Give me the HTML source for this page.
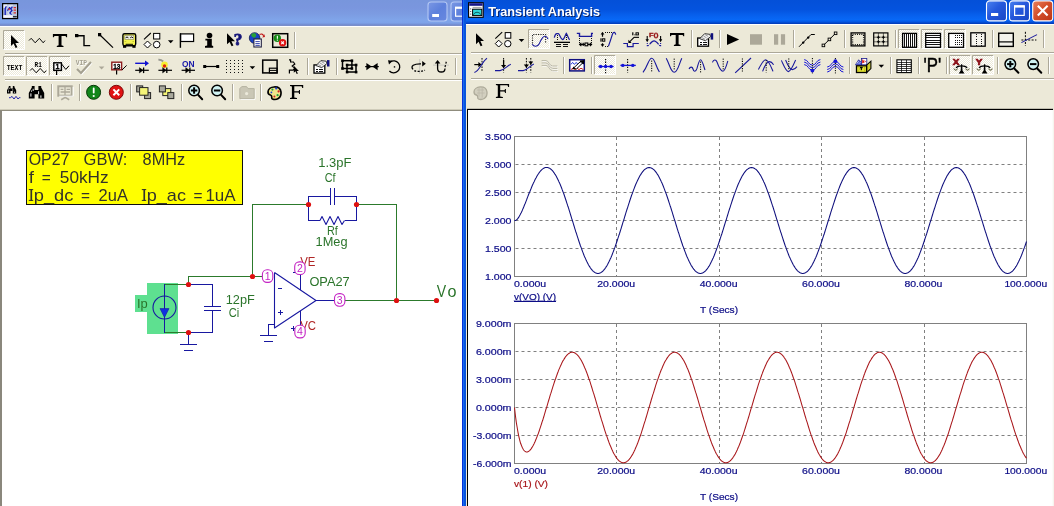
<!DOCTYPE html>
<html><head><meta charset="utf-8"><title>Transient Analysis</title><style>
html,body{margin:0;padding:0;}
body{width:1054px;height:506px;overflow:hidden;position:relative;background:#ece9d8;font-family:"Liberation Sans",sans-serif;}
.abs{position:absolute;}
#lwin{position:absolute;left:0;top:0;width:462px;height:506px;background:#ece9d8;overflow:hidden;}
#ltitle{position:absolute;left:0;top:0;width:462px;height:26px;background:linear-gradient(to bottom,#7896dc 0%,#7a96de 30%,#7c9ce2 55%,#80a5ea 78%,#7ea2e8 88%,#7590d4 94%,#7f8fc4 100%);}
#lclient{position:absolute;left:0;top:110px;width:462px;height:400px;background:#fff;border-left:2px solid #8a877c;border-top:1px solid #8f8c7d;box-sizing:border-box;box-shadow:0 -1px 0 #cfccba;}
#rwin{position:absolute;left:462px;top:0;width:592px;height:506px;background:#ece9d8;overflow:hidden;}
#rtitle{position:absolute;left:0;top:0;width:592px;height:24px;background:linear-gradient(to bottom,#0450d8 0%,#0453de 40%,#075fec 62%,#0868f6 82%,#0558e4 90%,#0238b4 100%);}
#rborder{position:absolute;left:0;top:0;width:4px;height:506px;background:linear-gradient(to right,#0831d9 0,#0831d9 1px,#166aee 1px,#166aee 2px,#0855dd 2px,#0855dd 4px);}
#rclient{position:absolute;left:5px;top:109px;width:586px;height:400px;background:#fff;border-left:1px solid #000;border-top:1px solid #000;box-shadow:0 -1px 0 rgba(0,0,0,0.18);box-sizing:border-box;}
svg{position:absolute;left:0;top:0;overflow:visible;will-change:transform;}
svg{font-family:"Liberation Sans",sans-serif;}
</style></head><body>
<div id="lwin"><div id="ltitle"></div><div id="lclient"></div></div>
<div id="rwin"><div id="rtitle"></div><div id="rborder"></div><div id="rclient"></div></div>
<svg id="ov" width="1054" height="506" viewBox="0 0 1054 506">
<rect x="514.5" y="136.5" width="512.0" height="140" fill="#fff" stroke="#808080" stroke-width="1"/>
<line x1="616.5" y1="137" x2="616.5" y2="276" stroke="#808080" stroke-width="1" stroke-dasharray="3 3"/>
<line x1="719.5" y1="137" x2="719.5" y2="276" stroke="#808080" stroke-width="1" stroke-dasharray="3 3"/>
<line x1="821.5" y1="137" x2="821.5" y2="276" stroke="#808080" stroke-width="1" stroke-dasharray="3 3"/>
<line x1="924.5" y1="137" x2="924.5" y2="276" stroke="#808080" stroke-width="1" stroke-dasharray="3 3"/>
<line x1="515.5" y1="164.5" x2="1026.5" y2="164.5" stroke="#808080" stroke-width="1" stroke-dasharray="3 3"/>
<line x1="515.5" y1="192.5" x2="1026.5" y2="192.5" stroke="#808080" stroke-width="1" stroke-dasharray="3 3"/>
<line x1="515.5" y1="220.5" x2="1026.5" y2="220.5" stroke="#808080" stroke-width="1" stroke-dasharray="3 3"/>
<line x1="515.5" y1="248.5" x2="1026.5" y2="248.5" stroke="#808080" stroke-width="1" stroke-dasharray="3 3"/>
<text x="511.5" y="140" font-size="9.3" fill="#0c0c86" stroke="#0c0c86" stroke-width="0.2" text-anchor="end" textLength="26.5" lengthAdjust="spacingAndGlyphs" >3.500</text>
<text x="511.5" y="168" font-size="9.3" fill="#0c0c86" stroke="#0c0c86" stroke-width="0.2" text-anchor="end" textLength="26.5" lengthAdjust="spacingAndGlyphs" >3.000</text>
<text x="511.5" y="196" font-size="9.3" fill="#0c0c86" stroke="#0c0c86" stroke-width="0.2" text-anchor="end" textLength="26.5" lengthAdjust="spacingAndGlyphs" >2.500</text>
<text x="511.5" y="224" font-size="9.3" fill="#0c0c86" stroke="#0c0c86" stroke-width="0.2" text-anchor="end" textLength="26.5" lengthAdjust="spacingAndGlyphs" >2.000</text>
<text x="511.5" y="252" font-size="9.3" fill="#0c0c86" stroke="#0c0c86" stroke-width="0.2" text-anchor="end" textLength="26.5" lengthAdjust="spacingAndGlyphs" >1.500</text>
<text x="511.5" y="280" font-size="9.3" fill="#0c0c86" stroke="#0c0c86" stroke-width="0.2" text-anchor="end" textLength="26.5" lengthAdjust="spacingAndGlyphs" >1.000</text>
<text x="514" y="286.5" font-size="9.3" fill="#0c0c86" stroke="#0c0c86" stroke-width="0.2" text-anchor="start" textLength="32.2" lengthAdjust="spacingAndGlyphs" >0.000u</text>
<text x="616.2" y="286.5" font-size="9.3" fill="#0c0c86" stroke="#0c0c86" stroke-width="0.2" text-anchor="middle" textLength="37.9" lengthAdjust="spacingAndGlyphs" >20.000u</text>
<text x="718.6" y="286.5" font-size="9.3" fill="#0c0c86" stroke="#0c0c86" stroke-width="0.2" text-anchor="middle" textLength="37.9" lengthAdjust="spacingAndGlyphs" >40.000u</text>
<text x="821.0" y="286.5" font-size="9.3" fill="#0c0c86" stroke="#0c0c86" stroke-width="0.2" text-anchor="middle" textLength="37.9" lengthAdjust="spacingAndGlyphs" >60.000u</text>
<text x="923.4" y="286.5" font-size="9.3" fill="#0c0c86" stroke="#0c0c86" stroke-width="0.2" text-anchor="middle" textLength="37.9" lengthAdjust="spacingAndGlyphs" >80.000u</text>
<text x="1025.8" y="286.5" font-size="9.3" fill="#0c0c86" stroke="#0c0c86" stroke-width="0.2" text-anchor="middle" textLength="42.8" lengthAdjust="spacingAndGlyphs" >100.000u</text>
<path d="M514.5,220.5 L515.0,220.5 L515.5,220.4 L516.0,220.2 L516.5,219.8 L517.1,219.4 L517.6,218.8 L518.1,218.2 L518.6,217.4 L519.1,216.6 L519.6,215.7 L520.1,214.8 L520.6,213.8 L521.2,212.8 L521.7,211.7 L522.2,210.6 L522.7,209.4 L523.2,208.2 L523.7,207.0 L524.2,205.7 L524.7,204.4 L525.3,203.2 L525.8,201.9 L526.3,200.6 L526.8,199.3 L527.3,197.9 L527.8,196.6 L528.3,195.3 L528.8,194.0 L529.3,192.7 L529.9,191.5 L530.4,190.2 L530.9,189.0 L531.4,187.7 L531.9,186.5 L532.4,185.3 L532.9,184.2 L533.4,183.1 L534.0,182.0 L534.5,180.9 L535.0,179.8 L535.5,178.8 L536.0,177.9 L536.5,176.9 L537.0,176.0 L537.5,175.2 L538.1,174.3 L538.6,173.6 L539.1,172.8 L539.6,172.1 L540.1,171.5 L540.6,170.9 L541.1,170.3 L541.6,169.8 L542.1,169.4 L542.7,168.9 L543.2,168.6 L543.7,168.3 L544.2,168.0 L544.7,167.8 L545.2,167.6 L545.7,167.5 L546.2,167.4 L546.8,167.4 L547.3,167.5 L547.8,167.5 L548.3,167.7 L548.8,167.9 L549.3,168.1 L549.8,168.4 L550.3,168.8 L550.9,169.2 L551.4,169.6 L551.9,170.1 L552.4,170.6 L552.9,171.2 L553.4,171.9 L553.9,172.6 L554.4,173.3 L554.9,174.1 L555.5,174.9 L556.0,175.8 L556.5,176.7 L557.0,177.7 L557.5,178.7 L558.0,179.7 L558.5,180.8 L559.0,181.9 L559.6,183.1 L560.1,184.3 L560.6,185.5 L561.1,186.7 L561.6,188.0 L562.1,189.4 L562.6,190.7 L563.1,192.1 L563.7,193.5 L564.2,195.0 L564.7,196.5 L565.2,198.0 L565.7,199.5 L566.2,201.0 L566.7,202.6 L567.2,204.1 L567.7,205.7 L568.3,207.3 L568.8,208.9 L569.3,210.6 L569.8,212.2 L570.3,213.9 L570.8,215.5 L571.3,217.2 L571.8,218.8 L572.4,220.5 L572.9,222.2 L573.4,223.8 L573.9,225.5 L574.4,227.1 L574.9,228.8 L575.4,230.4 L575.9,232.0 L576.5,233.7 L577.0,235.3 L577.5,236.9 L578.0,238.4 L578.5,240.0 L579.0,241.5 L579.5,243.0 L580.0,244.5 L580.5,246.0 L581.1,247.4 L581.6,248.9 L582.1,250.2 L582.6,251.6 L583.1,252.9 L583.6,254.2 L584.1,255.5 L584.6,256.7 L585.2,257.9 L585.7,259.1 L586.2,260.2 L586.7,261.3 L587.2,262.3 L587.7,263.3 L588.2,264.3 L588.7,265.2 L589.3,266.1 L589.8,266.9 L590.3,267.7 L590.8,268.4 L591.3,269.1 L591.8,269.7 L592.3,270.3 L592.8,270.8 L593.3,271.3 L593.9,271.8 L594.4,272.1 L594.9,272.5 L595.4,272.8 L595.9,273.0 L596.4,273.2 L596.9,273.3 L597.4,273.4 L598.0,273.4 L598.5,273.4 L599.0,273.3 L599.5,273.2 L600.0,273.0 L600.5,272.8 L601.0,272.5 L601.5,272.1 L602.1,271.8 L602.6,271.3 L603.1,270.8 L603.6,270.3 L604.1,269.7 L604.6,269.1 L605.1,268.4 L605.6,267.7 L606.1,266.9 L606.7,266.1 L607.2,265.2 L607.7,264.3 L608.2,263.3 L608.7,262.3 L609.2,261.3 L609.7,260.2 L610.2,259.1 L610.8,257.9 L611.3,256.7 L611.8,255.5 L612.3,254.2 L612.8,252.9 L613.3,251.6 L613.8,250.2 L614.3,248.9 L614.9,247.4 L615.4,246.0 L615.9,244.5 L616.4,243.0 L616.9,241.5 L617.4,240.0 L617.9,238.4 L618.4,236.9 L618.9,235.3 L619.5,233.7 L620.0,232.0 L620.5,230.4 L621.0,228.8 L621.5,227.1 L622.0,225.5 L622.5,223.8 L623.0,222.2 L623.6,220.5 L624.1,218.8 L624.6,217.2 L625.1,215.5 L625.6,213.9 L626.1,212.2 L626.6,210.6 L627.1,209.0 L627.7,207.3 L628.2,205.7 L628.7,204.1 L629.2,202.6 L629.7,201.0 L630.2,199.5 L630.7,198.0 L631.2,196.5 L631.7,195.0 L632.3,193.6 L632.8,192.1 L633.3,190.8 L633.8,189.4 L634.3,188.1 L634.8,186.8 L635.3,185.5 L635.8,184.3 L636.4,183.1 L636.9,181.9 L637.4,180.8 L637.9,179.7 L638.4,178.7 L638.9,177.7 L639.4,176.7 L639.9,175.8 L640.5,174.9 L641.0,174.1 L641.5,173.3 L642.0,172.6 L642.5,171.9 L643.0,171.3 L643.5,170.7 L644.0,170.2 L644.5,169.7 L645.1,169.2 L645.6,168.9 L646.1,168.5 L646.6,168.2 L647.1,168.0 L647.6,167.8 L648.1,167.7 L648.6,167.6 L649.2,167.6 L649.7,167.6 L650.2,167.7 L650.7,167.8 L651.2,168.0 L651.7,168.2 L652.2,168.5 L652.7,168.9 L653.3,169.2 L653.8,169.7 L654.3,170.2 L654.8,170.7 L655.3,171.3 L655.8,171.9 L656.3,172.6 L656.8,173.3 L657.3,174.1 L657.9,174.9 L658.4,175.8 L658.9,176.7 L659.4,177.7 L659.9,178.7 L660.4,179.7 L660.9,180.8 L661.4,181.9 L662.0,183.1 L662.5,184.3 L663.0,185.5 L663.5,186.8 L664.0,188.1 L664.5,189.4 L665.0,190.8 L665.5,192.1 L666.1,193.6 L666.6,195.0 L667.1,196.5 L667.6,198.0 L668.1,199.5 L668.6,201.0 L669.1,202.6 L669.6,204.1 L670.1,205.7 L670.7,207.3 L671.2,209.0 L671.7,210.6 L672.2,212.2 L672.7,213.9 L673.2,215.5 L673.7,217.2 L674.2,218.8 L674.8,220.5 L675.3,222.2 L675.8,223.8 L676.3,225.5 L676.8,227.1 L677.3,228.8 L677.8,230.4 L678.3,232.0 L678.9,233.7 L679.4,235.3 L679.9,236.9 L680.4,238.4 L680.9,240.0 L681.4,241.5 L681.9,243.0 L682.4,244.5 L682.9,246.0 L683.5,247.4 L684.0,248.9 L684.5,250.2 L685.0,251.6 L685.5,252.9 L686.0,254.2 L686.5,255.5 L687.0,256.7 L687.6,257.9 L688.1,259.1 L688.6,260.2 L689.1,261.3 L689.6,262.3 L690.1,263.3 L690.6,264.3 L691.1,265.2 L691.7,266.1 L692.2,266.9 L692.7,267.7 L693.2,268.4 L693.7,269.1 L694.2,269.7 L694.7,270.3 L695.2,270.8 L695.7,271.3 L696.3,271.8 L696.8,272.1 L697.3,272.5 L697.8,272.8 L698.3,273.0 L698.8,273.2 L699.3,273.3 L699.8,273.4 L700.4,273.4 L700.9,273.4 L701.4,273.3 L701.9,273.2 L702.4,273.0 L702.9,272.8 L703.4,272.5 L703.9,272.1 L704.5,271.8 L705.0,271.3 L705.5,270.8 L706.0,270.3 L706.5,269.7 L707.0,269.1 L707.5,268.4 L708.0,267.7 L708.5,266.9 L709.1,266.1 L709.6,265.2 L710.1,264.3 L710.6,263.3 L711.1,262.3 L711.6,261.3 L712.1,260.2 L712.6,259.1 L713.2,257.9 L713.7,256.7 L714.2,255.5 L714.7,254.2 L715.2,252.9 L715.7,251.6 L716.2,250.2 L716.7,248.9 L717.3,247.4 L717.8,246.0 L718.3,244.5 L718.8,243.0 L719.3,241.5 L719.8,240.0 L720.3,238.4 L720.8,236.9 L721.3,235.3 L721.9,233.7 L722.4,232.0 L722.9,230.4 L723.4,228.8 L723.9,227.1 L724.4,225.5 L724.9,223.8 L725.4,222.2 L726.0,220.5 L726.5,218.8 L727.0,217.2 L727.5,215.5 L728.0,213.9 L728.5,212.2 L729.0,210.6 L729.5,209.0 L730.1,207.3 L730.6,205.7 L731.1,204.1 L731.6,202.6 L732.1,201.0 L732.6,199.5 L733.1,198.0 L733.6,196.5 L734.1,195.0 L734.7,193.6 L735.2,192.1 L735.7,190.8 L736.2,189.4 L736.7,188.1 L737.2,186.8 L737.7,185.5 L738.2,184.3 L738.8,183.1 L739.3,181.9 L739.8,180.8 L740.3,179.7 L740.8,178.7 L741.3,177.7 L741.8,176.7 L742.3,175.8 L742.9,174.9 L743.4,174.1 L743.9,173.3 L744.4,172.6 L744.9,171.9 L745.4,171.3 L745.9,170.7 L746.4,170.2 L746.9,169.7 L747.5,169.2 L748.0,168.9 L748.5,168.5 L749.0,168.2 L749.5,168.0 L750.0,167.8 L750.5,167.7 L751.0,167.6 L751.6,167.6 L752.1,167.6 L752.6,167.7 L753.1,167.8 L753.6,168.0 L754.1,168.2 L754.6,168.5 L755.1,168.9 L755.7,169.2 L756.2,169.7 L756.7,170.2 L757.2,170.7 L757.7,171.3 L758.2,171.9 L758.7,172.6 L759.2,173.3 L759.7,174.1 L760.3,174.9 L760.8,175.8 L761.3,176.7 L761.8,177.7 L762.3,178.7 L762.8,179.7 L763.3,180.8 L763.8,181.9 L764.4,183.1 L764.9,184.3 L765.4,185.5 L765.9,186.8 L766.4,188.1 L766.9,189.4 L767.4,190.8 L767.9,192.1 L768.5,193.6 L769.0,195.0 L769.5,196.5 L770.0,198.0 L770.5,199.5 L771.0,201.0 L771.5,202.6 L772.0,204.1 L772.5,205.7 L773.1,207.3 L773.6,209.0 L774.1,210.6 L774.6,212.2 L775.1,213.9 L775.6,215.5 L776.1,217.2 L776.6,218.8 L777.2,220.5 L777.7,222.2 L778.2,223.8 L778.7,225.5 L779.2,227.1 L779.7,228.8 L780.2,230.4 L780.7,232.0 L781.3,233.7 L781.8,235.3 L782.3,236.9 L782.8,238.4 L783.3,240.0 L783.8,241.5 L784.3,243.0 L784.8,244.5 L785.3,246.0 L785.9,247.4 L786.4,248.9 L786.9,250.2 L787.4,251.6 L787.9,252.9 L788.4,254.2 L788.9,255.5 L789.4,256.7 L790.0,257.9 L790.5,259.1 L791.0,260.2 L791.5,261.3 L792.0,262.3 L792.5,263.3 L793.0,264.3 L793.5,265.2 L794.1,266.1 L794.6,266.9 L795.1,267.7 L795.6,268.4 L796.1,269.1 L796.6,269.7 L797.1,270.3 L797.6,270.8 L798.1,271.3 L798.7,271.8 L799.2,272.1 L799.7,272.5 L800.2,272.8 L800.7,273.0 L801.2,273.2 L801.7,273.3 L802.2,273.4 L802.8,273.4 L803.3,273.4 L803.8,273.3 L804.3,273.2 L804.8,273.0 L805.3,272.8 L805.8,272.5 L806.3,272.1 L806.9,271.8 L807.4,271.3 L807.9,270.8 L808.4,270.3 L808.9,269.7 L809.4,269.1 L809.9,268.4 L810.4,267.7 L810.9,266.9 L811.5,266.1 L812.0,265.2 L812.5,264.3 L813.0,263.3 L813.5,262.3 L814.0,261.3 L814.5,260.2 L815.0,259.1 L815.6,257.9 L816.1,256.7 L816.6,255.5 L817.1,254.2 L817.6,252.9 L818.1,251.6 L818.6,250.2 L819.1,248.9 L819.7,247.4 L820.2,246.0 L820.7,244.5 L821.2,243.0 L821.7,241.5 L822.2,240.0 L822.7,238.4 L823.2,236.9 L823.7,235.3 L824.3,233.7 L824.8,232.0 L825.3,230.4 L825.8,228.8 L826.3,227.1 L826.8,225.5 L827.3,223.8 L827.8,222.2 L828.4,220.5 L828.9,218.8 L829.4,217.2 L829.9,215.5 L830.4,213.9 L830.9,212.2 L831.4,210.6 L831.9,209.0 L832.5,207.3 L833.0,205.7 L833.5,204.1 L834.0,202.6 L834.5,201.0 L835.0,199.5 L835.5,198.0 L836.0,196.5 L836.5,195.0 L837.1,193.6 L837.6,192.1 L838.1,190.8 L838.6,189.4 L839.1,188.1 L839.6,186.8 L840.1,185.5 L840.6,184.3 L841.2,183.1 L841.7,181.9 L842.2,180.8 L842.7,179.7 L843.2,178.7 L843.7,177.7 L844.2,176.7 L844.7,175.8 L845.3,174.9 L845.8,174.1 L846.3,173.3 L846.8,172.6 L847.3,171.9 L847.8,171.3 L848.3,170.7 L848.8,170.2 L849.3,169.7 L849.9,169.2 L850.4,168.9 L850.9,168.5 L851.4,168.2 L851.9,168.0 L852.4,167.8 L852.9,167.7 L853.4,167.6 L854.0,167.6 L854.5,167.6 L855.0,167.7 L855.5,167.8 L856.0,168.0 L856.5,168.2 L857.0,168.5 L857.5,168.9 L858.1,169.2 L858.6,169.7 L859.1,170.2 L859.6,170.7 L860.1,171.3 L860.6,171.9 L861.1,172.6 L861.6,173.3 L862.1,174.1 L862.7,174.9 L863.2,175.8 L863.7,176.7 L864.2,177.7 L864.7,178.7 L865.2,179.7 L865.7,180.8 L866.2,181.9 L866.8,183.1 L867.3,184.3 L867.8,185.5 L868.3,186.8 L868.8,188.1 L869.3,189.4 L869.8,190.8 L870.3,192.1 L870.9,193.6 L871.4,195.0 L871.9,196.5 L872.4,198.0 L872.9,199.5 L873.4,201.0 L873.9,202.6 L874.4,204.1 L874.9,205.7 L875.5,207.3 L876.0,209.0 L876.5,210.6 L877.0,212.2 L877.5,213.9 L878.0,215.5 L878.5,217.2 L879.0,218.8 L879.6,220.5 L880.1,222.2 L880.6,223.8 L881.1,225.5 L881.6,227.1 L882.1,228.8 L882.6,230.4 L883.1,232.0 L883.7,233.7 L884.2,235.3 L884.7,236.9 L885.2,238.4 L885.7,240.0 L886.2,241.5 L886.7,243.0 L887.2,244.5 L887.7,246.0 L888.3,247.4 L888.8,248.9 L889.3,250.2 L889.8,251.6 L890.3,252.9 L890.8,254.2 L891.3,255.5 L891.8,256.7 L892.4,257.9 L892.9,259.1 L893.4,260.2 L893.9,261.3 L894.4,262.3 L894.9,263.3 L895.4,264.3 L895.9,265.2 L896.5,266.1 L897.0,266.9 L897.5,267.7 L898.0,268.4 L898.5,269.1 L899.0,269.7 L899.5,270.3 L900.0,270.8 L900.5,271.3 L901.1,271.8 L901.6,272.1 L902.1,272.5 L902.6,272.8 L903.1,273.0 L903.6,273.2 L904.1,273.3 L904.6,273.4 L905.2,273.4 L905.7,273.4 L906.2,273.3 L906.7,273.2 L907.2,273.0 L907.7,272.8 L908.2,272.5 L908.7,272.1 L909.3,271.8 L909.8,271.3 L910.3,270.8 L910.8,270.3 L911.3,269.7 L911.8,269.1 L912.3,268.4 L912.8,267.7 L913.3,266.9 L913.9,266.1 L914.4,265.2 L914.9,264.3 L915.4,263.3 L915.9,262.3 L916.4,261.3 L916.9,260.2 L917.4,259.1 L918.0,257.9 L918.5,256.7 L919.0,255.5 L919.5,254.2 L920.0,252.9 L920.5,251.6 L921.0,250.2 L921.5,248.9 L922.1,247.4 L922.6,246.0 L923.1,244.5 L923.6,243.0 L924.1,241.5 L924.6,240.0 L925.1,238.4 L925.6,236.9 L926.1,235.3 L926.7,233.7 L927.2,232.0 L927.7,230.4 L928.2,228.8 L928.7,227.1 L929.2,225.5 L929.7,223.8 L930.2,222.2 L930.8,220.5 L931.3,218.8 L931.8,217.2 L932.3,215.5 L932.8,213.9 L933.3,212.2 L933.8,210.6 L934.3,209.0 L934.9,207.3 L935.4,205.7 L935.9,204.1 L936.4,202.6 L936.9,201.0 L937.4,199.5 L937.9,198.0 L938.4,196.5 L938.9,195.0 L939.5,193.6 L940.0,192.1 L940.5,190.8 L941.0,189.4 L941.5,188.1 L942.0,186.8 L942.5,185.5 L943.0,184.3 L943.6,183.1 L944.1,181.9 L944.6,180.8 L945.1,179.7 L945.6,178.7 L946.1,177.7 L946.6,176.7 L947.1,175.8 L947.7,174.9 L948.2,174.1 L948.7,173.3 L949.2,172.6 L949.7,171.9 L950.2,171.3 L950.7,170.7 L951.2,170.2 L951.7,169.7 L952.3,169.2 L952.8,168.9 L953.3,168.5 L953.8,168.2 L954.3,168.0 L954.8,167.8 L955.3,167.7 L955.8,167.6 L956.4,167.6 L956.9,167.6 L957.4,167.7 L957.9,167.8 L958.4,168.0 L958.9,168.2 L959.4,168.5 L959.9,168.9 L960.5,169.2 L961.0,169.7 L961.5,170.2 L962.0,170.7 L962.5,171.3 L963.0,171.9 L963.5,172.6 L964.0,173.3 L964.5,174.1 L965.1,174.9 L965.6,175.8 L966.1,176.7 L966.6,177.7 L967.1,178.7 L967.6,179.7 L968.1,180.8 L968.6,181.9 L969.2,183.1 L969.7,184.3 L970.2,185.5 L970.7,186.8 L971.2,188.1 L971.7,189.4 L972.2,190.8 L972.7,192.1 L973.3,193.6 L973.8,195.0 L974.3,196.5 L974.8,198.0 L975.3,199.5 L975.8,201.0 L976.3,202.6 L976.8,204.1 L977.3,205.7 L977.9,207.3 L978.4,209.0 L978.9,210.6 L979.4,212.2 L979.9,213.9 L980.4,215.5 L980.9,217.2 L981.4,218.8 L982.0,220.5 L982.5,222.2 L983.0,223.8 L983.5,225.5 L984.0,227.1 L984.5,228.8 L985.0,230.4 L985.5,232.0 L986.1,233.7 L986.6,235.3 L987.1,236.9 L987.6,238.4 L988.1,240.0 L988.6,241.5 L989.1,243.0 L989.6,244.5 L990.1,246.0 L990.7,247.4 L991.2,248.9 L991.7,250.2 L992.2,251.6 L992.7,252.9 L993.2,254.2 L993.7,255.5 L994.2,256.7 L994.8,257.9 L995.3,259.1 L995.8,260.2 L996.3,261.3 L996.8,262.3 L997.3,263.3 L997.8,264.3 L998.3,265.2 L998.9,266.1 L999.4,266.9 L999.9,267.7 L1000.4,268.4 L1000.9,269.1 L1001.4,269.7 L1001.9,270.3 L1002.4,270.8 L1002.9,271.3 L1003.5,271.8 L1004.0,272.1 L1004.5,272.5 L1005.0,272.8 L1005.5,273.0 L1006.0,273.2 L1006.5,273.3 L1007.0,273.4 L1007.6,273.4 L1008.1,273.4 L1008.6,273.3 L1009.1,273.2 L1009.6,273.0 L1010.1,272.8 L1010.6,272.5 L1011.1,272.1 L1011.7,271.8 L1012.2,271.3 L1012.7,270.8 L1013.2,270.3 L1013.7,269.7 L1014.2,269.1 L1014.7,268.4 L1015.2,267.7 L1015.7,266.9 L1016.3,266.1 L1016.8,265.2 L1017.3,264.3 L1017.8,263.3 L1018.3,262.3 L1018.8,261.3 L1019.3,260.2 L1019.8,259.1 L1020.4,257.9 L1020.9,256.7 L1021.4,255.5 L1021.9,254.2 L1022.4,252.9 L1022.9,251.6 L1023.4,250.2 L1023.9,248.9 L1024.5,247.4 L1025.0,246.0 L1025.5,244.5 L1026.0,243.0 L1026.5,241.5" fill="none" stroke="#0e0e7c" stroke-width="1.05" stroke-linejoin="round"/>
<text x="514" y="299.8" font-size="9" fill="#0c0c86" stroke="#0c0c86" stroke-width="0.2" text-anchor="start" textLength="42" lengthAdjust="spacingAndGlyphs" text-decoration="underline">v(VO) (V)</text>
<line x1="514" y1="301.5" x2="556" y2="301.5" stroke="#0c0c86" stroke-width="1"/>
<text x="719" y="313" font-size="9" fill="#0c0c86" stroke="#0c0c86" stroke-width="0.2" text-anchor="middle" textLength="38" lengthAdjust="spacingAndGlyphs" >T (Secs)</text>
<rect x="514.5" y="323.5" width="512.0" height="140" fill="#fff" stroke="#808080" stroke-width="1"/>
<line x1="616.5" y1="324" x2="616.5" y2="463" stroke="#808080" stroke-width="1" stroke-dasharray="3 3"/>
<line x1="719.5" y1="324" x2="719.5" y2="463" stroke="#808080" stroke-width="1" stroke-dasharray="3 3"/>
<line x1="821.5" y1="324" x2="821.5" y2="463" stroke="#808080" stroke-width="1" stroke-dasharray="3 3"/>
<line x1="924.5" y1="324" x2="924.5" y2="463" stroke="#808080" stroke-width="1" stroke-dasharray="3 3"/>
<line x1="515.5" y1="351.5" x2="1026.5" y2="351.5" stroke="#808080" stroke-width="1" stroke-dasharray="3 3"/>
<line x1="515.5" y1="379.5" x2="1026.5" y2="379.5" stroke="#808080" stroke-width="1" stroke-dasharray="3 3"/>
<line x1="515.5" y1="407.5" x2="1026.5" y2="407.5" stroke="#808080" stroke-width="1" stroke-dasharray="3 3"/>
<line x1="515.5" y1="435.5" x2="1026.5" y2="435.5" stroke="#808080" stroke-width="1" stroke-dasharray="3 3"/>
<text x="511.5" y="327" font-size="9.3" fill="#0c0c86" stroke="#0c0c86" stroke-width="0.2" text-anchor="end" textLength="35.6" lengthAdjust="spacingAndGlyphs" >9.000m</text>
<text x="511.5" y="355" font-size="9.3" fill="#0c0c86" stroke="#0c0c86" stroke-width="0.2" text-anchor="end" textLength="35.6" lengthAdjust="spacingAndGlyphs" >6.000m</text>
<text x="511.5" y="383" font-size="9.3" fill="#0c0c86" stroke="#0c0c86" stroke-width="0.2" text-anchor="end" textLength="35.6" lengthAdjust="spacingAndGlyphs" >3.000m</text>
<text x="511.5" y="411" font-size="9.3" fill="#0c0c86" stroke="#0c0c86" stroke-width="0.2" text-anchor="end" textLength="35.6" lengthAdjust="spacingAndGlyphs" >0.000m</text>
<text x="511.5" y="439" font-size="9.3" fill="#0c0c86" stroke="#0c0c86" stroke-width="0.2" text-anchor="end" textLength="38.5" lengthAdjust="spacingAndGlyphs" >-3.000m</text>
<text x="511.5" y="467" font-size="9.3" fill="#0c0c86" stroke="#0c0c86" stroke-width="0.2" text-anchor="end" textLength="38.5" lengthAdjust="spacingAndGlyphs" >-6.000m</text>
<text x="514" y="473.5" font-size="9.3" fill="#0c0c86" stroke="#0c0c86" stroke-width="0.2" text-anchor="start" textLength="32.2" lengthAdjust="spacingAndGlyphs" >0.000u</text>
<text x="616.2" y="473.5" font-size="9.3" fill="#0c0c86" stroke="#0c0c86" stroke-width="0.2" text-anchor="middle" textLength="37.9" lengthAdjust="spacingAndGlyphs" >20.000u</text>
<text x="718.6" y="473.5" font-size="9.3" fill="#0c0c86" stroke="#0c0c86" stroke-width="0.2" text-anchor="middle" textLength="37.9" lengthAdjust="spacingAndGlyphs" >40.000u</text>
<text x="821.0" y="473.5" font-size="9.3" fill="#0c0c86" stroke="#0c0c86" stroke-width="0.2" text-anchor="middle" textLength="37.9" lengthAdjust="spacingAndGlyphs" >60.000u</text>
<text x="923.4" y="473.5" font-size="9.3" fill="#0c0c86" stroke="#0c0c86" stroke-width="0.2" text-anchor="middle" textLength="37.9" lengthAdjust="spacingAndGlyphs" >80.000u</text>
<text x="1025.8" y="473.5" font-size="9.3" fill="#0c0c86" stroke="#0c0c86" stroke-width="0.2" text-anchor="middle" textLength="42.8" lengthAdjust="spacingAndGlyphs" >100.000u</text>
<path d="M514.5,407.5 L515.0,412.0 L515.5,416.3 L516.0,420.1 L516.5,423.7 L517.1,427.0 L517.6,430.0 L518.1,432.8 L518.6,435.3 L519.1,437.6 L519.6,439.7 L520.1,441.6 L520.6,443.3 L521.2,444.8 L521.7,446.1 L522.2,447.3 L522.7,448.3 L523.2,449.2 L523.7,450.0 L524.2,450.6 L524.7,451.1 L525.3,451.4 L525.8,451.7 L526.3,451.9 L526.8,451.9 L527.3,451.9 L527.8,451.7 L528.3,451.5 L528.8,451.2 L529.3,450.8 L529.9,450.3 L530.4,449.7 L530.9,449.1 L531.4,448.4 L531.9,447.6 L532.4,446.8 L532.9,445.9 L533.4,444.9 L534.0,443.9 L534.5,442.8 L535.0,441.7 L535.5,440.5 L536.0,439.3 L536.5,438.1 L537.0,436.8 L537.5,435.4 L538.1,434.0 L538.6,432.6 L539.1,431.2 L539.6,429.7 L540.1,428.2 L540.6,426.7 L541.1,425.1 L541.6,423.5 L542.1,421.9 L542.7,420.3 L543.2,418.6 L543.7,417.0 L544.2,415.3 L544.7,413.6 L545.2,411.9 L545.7,410.2 L546.2,408.5 L546.8,406.8 L547.3,405.1 L547.8,403.4 L548.3,401.7 L548.8,400.0 L549.3,398.3 L549.8,396.6 L550.3,394.9 L550.9,393.2 L551.4,391.6 L551.9,389.9 L552.4,388.3 L552.9,386.7 L553.4,385.1 L553.9,383.6 L554.4,382.0 L554.9,380.5 L555.5,379.0 L556.0,377.5 L556.5,376.1 L557.0,374.7 L557.5,373.3 L558.0,372.0 L558.5,370.6 L559.0,369.4 L559.6,368.1 L560.1,366.9 L560.6,365.8 L561.1,364.7 L561.6,363.6 L562.1,362.6 L562.6,361.6 L563.1,360.6 L563.7,359.7 L564.2,358.9 L564.7,358.1 L565.2,357.3 L565.7,356.6 L566.2,356.0 L566.7,355.4 L567.2,354.8 L567.7,354.3 L568.3,353.9 L568.8,353.5 L569.3,353.2 L569.8,352.9 L570.3,352.6 L570.8,352.5 L571.3,352.3 L571.8,352.3 L572.4,352.2 L572.9,352.3 L573.4,352.4 L573.9,352.5 L574.4,352.7 L574.9,353.0 L575.4,353.3 L575.9,353.7 L576.5,354.1 L577.0,354.5 L577.5,355.1 L578.0,355.6 L578.5,356.3 L579.0,356.9 L579.5,357.7 L580.0,358.4 L580.5,359.2 L581.1,360.1 L581.6,361.0 L582.1,362.0 L582.6,363.0 L583.1,364.1 L583.6,365.1 L584.1,366.3 L584.6,367.5 L585.2,368.7 L585.7,369.9 L586.2,371.2 L586.7,372.5 L587.2,373.9 L587.7,375.3 L588.2,376.7 L588.7,378.2 L589.3,379.7 L589.8,381.2 L590.3,382.7 L590.8,384.3 L591.3,385.9 L591.8,387.5 L592.3,389.1 L592.8,390.8 L593.3,392.4 L593.9,394.1 L594.4,395.8 L594.9,397.5 L595.4,399.2 L595.9,400.9 L596.4,402.6 L596.9,404.4 L597.4,406.1 L598.0,407.8 L598.5,409.6 L599.0,411.3 L599.5,413.0 L600.0,414.8 L600.5,416.5 L601.0,418.2 L601.5,419.9 L602.1,421.6 L602.6,423.2 L603.1,424.9 L603.6,426.5 L604.1,428.2 L604.6,429.8 L605.1,431.3 L605.6,432.9 L606.1,434.4 L606.7,435.9 L607.2,437.4 L607.7,438.8 L608.2,440.3 L608.7,441.6 L609.2,443.0 L609.7,444.3 L610.2,445.6 L610.8,446.8 L611.3,448.0 L611.8,449.2 L612.3,450.3 L612.8,451.4 L613.3,452.4 L613.8,453.4 L614.3,454.3 L614.9,455.2 L615.4,456.1 L615.9,456.9 L616.4,457.6 L616.9,458.3 L617.4,459.0 L617.9,459.6 L618.4,460.2 L618.9,460.7 L619.5,461.1 L620.0,461.5 L620.5,461.8 L621.0,462.1 L621.5,462.4 L622.0,462.5 L622.5,462.7 L623.0,462.7 L623.6,462.8 L624.1,462.7 L624.6,462.6 L625.1,462.5 L625.6,462.3 L626.1,462.0 L626.6,461.7 L627.1,461.3 L627.7,460.9 L628.2,460.5 L628.7,459.9 L629.2,459.4 L629.7,458.7 L630.2,458.1 L630.7,457.3 L631.2,456.6 L631.7,455.8 L632.3,454.9 L632.8,454.0 L633.3,453.0 L633.8,452.0 L634.3,450.9 L634.8,449.9 L635.3,448.7 L635.8,447.5 L636.4,446.3 L636.9,445.1 L637.4,443.8 L637.9,442.5 L638.4,441.1 L638.9,439.7 L639.4,438.3 L639.9,436.8 L640.5,435.3 L641.0,433.8 L641.5,432.3 L642.0,430.7 L642.5,429.1 L643.0,427.5 L643.5,425.9 L644.0,424.2 L644.5,422.6 L645.1,420.9 L645.6,419.2 L646.1,417.5 L646.6,415.8 L647.1,414.1 L647.6,412.4 L648.1,410.6 L648.6,408.9 L649.2,407.2 L649.7,405.4 L650.2,403.7 L650.7,402.0 L651.2,400.2 L651.7,398.5 L652.2,396.8 L652.7,395.1 L653.3,393.4 L653.8,391.8 L654.3,390.1 L654.8,388.5 L655.3,386.8 L655.8,385.2 L656.3,383.7 L656.8,382.1 L657.3,380.6 L657.9,379.1 L658.4,377.6 L658.9,376.2 L659.4,374.7 L659.9,373.4 L660.4,372.0 L660.9,370.7 L661.4,369.4 L662.0,368.2 L662.5,367.0 L663.0,365.8 L663.5,364.7 L664.0,363.6 L664.5,362.6 L665.0,361.6 L665.5,360.7 L666.1,359.8 L666.6,358.9 L667.1,358.1 L667.6,357.4 L668.1,356.7 L668.6,356.0 L669.1,355.4 L669.6,354.8 L670.1,354.3 L670.7,353.9 L671.2,353.5 L671.7,353.2 L672.2,352.9 L672.7,352.6 L673.2,352.5 L673.7,352.3 L674.2,352.3 L674.8,352.2 L675.3,352.3 L675.8,352.4 L676.3,352.5 L676.8,352.7 L677.3,353.0 L677.8,353.3 L678.3,353.7 L678.9,354.1 L679.4,354.5 L679.9,355.1 L680.4,355.6 L680.9,356.3 L681.4,356.9 L681.9,357.7 L682.4,358.4 L682.9,359.2 L683.5,360.1 L684.0,361.0 L684.5,362.0 L685.0,363.0 L685.5,364.1 L686.0,365.1 L686.5,366.3 L687.0,367.5 L687.6,368.7 L688.1,369.9 L688.6,371.2 L689.1,372.5 L689.6,373.9 L690.1,375.3 L690.6,376.7 L691.1,378.2 L691.7,379.7 L692.2,381.2 L692.7,382.7 L693.2,384.3 L693.7,385.9 L694.2,387.5 L694.7,389.1 L695.2,390.8 L695.7,392.4 L696.3,394.1 L696.8,395.8 L697.3,397.5 L697.8,399.2 L698.3,400.9 L698.8,402.6 L699.3,404.4 L699.8,406.1 L700.4,407.8 L700.9,409.6 L701.4,411.3 L701.9,413.0 L702.4,414.8 L702.9,416.5 L703.4,418.2 L703.9,419.9 L704.5,421.6 L705.0,423.2 L705.5,424.9 L706.0,426.5 L706.5,428.2 L707.0,429.8 L707.5,431.3 L708.0,432.9 L708.5,434.4 L709.1,435.9 L709.6,437.4 L710.1,438.8 L710.6,440.3 L711.1,441.6 L711.6,443.0 L712.1,444.3 L712.6,445.6 L713.2,446.8 L713.7,448.0 L714.2,449.2 L714.7,450.3 L715.2,451.4 L715.7,452.4 L716.2,453.4 L716.7,454.3 L717.3,455.2 L717.8,456.1 L718.3,456.9 L718.8,457.6 L719.3,458.3 L719.8,459.0 L720.3,459.6 L720.8,460.2 L721.3,460.7 L721.9,461.1 L722.4,461.5 L722.9,461.8 L723.4,462.1 L723.9,462.4 L724.4,462.5 L724.9,462.7 L725.4,462.7 L726.0,462.8 L726.5,462.7 L727.0,462.6 L727.5,462.5 L728.0,462.3 L728.5,462.0 L729.0,461.7 L729.5,461.3 L730.1,460.9 L730.6,460.5 L731.1,459.9 L731.6,459.4 L732.1,458.7 L732.6,458.1 L733.1,457.3 L733.6,456.6 L734.1,455.8 L734.7,454.9 L735.2,454.0 L735.7,453.0 L736.2,452.0 L736.7,450.9 L737.2,449.9 L737.7,448.7 L738.2,447.5 L738.8,446.3 L739.3,445.1 L739.8,443.8 L740.3,442.5 L740.8,441.1 L741.3,439.7 L741.8,438.3 L742.3,436.8 L742.9,435.3 L743.4,433.8 L743.9,432.3 L744.4,430.7 L744.9,429.1 L745.4,427.5 L745.9,425.9 L746.4,424.2 L746.9,422.6 L747.5,420.9 L748.0,419.2 L748.5,417.5 L749.0,415.8 L749.5,414.1 L750.0,412.4 L750.5,410.6 L751.0,408.9 L751.6,407.2 L752.1,405.4 L752.6,403.7 L753.1,402.0 L753.6,400.2 L754.1,398.5 L754.6,396.8 L755.1,395.1 L755.7,393.4 L756.2,391.8 L756.7,390.1 L757.2,388.5 L757.7,386.8 L758.2,385.2 L758.7,383.7 L759.2,382.1 L759.7,380.6 L760.3,379.1 L760.8,377.6 L761.3,376.2 L761.8,374.7 L762.3,373.4 L762.8,372.0 L763.3,370.7 L763.8,369.4 L764.4,368.2 L764.9,367.0 L765.4,365.8 L765.9,364.7 L766.4,363.6 L766.9,362.6 L767.4,361.6 L767.9,360.7 L768.5,359.8 L769.0,358.9 L769.5,358.1 L770.0,357.4 L770.5,356.7 L771.0,356.0 L771.5,355.4 L772.0,354.8 L772.5,354.3 L773.1,353.9 L773.6,353.5 L774.1,353.2 L774.6,352.9 L775.1,352.6 L775.6,352.5 L776.1,352.3 L776.6,352.3 L777.2,352.2 L777.7,352.3 L778.2,352.4 L778.7,352.5 L779.2,352.7 L779.7,353.0 L780.2,353.3 L780.7,353.7 L781.3,354.1 L781.8,354.5 L782.3,355.1 L782.8,355.6 L783.3,356.3 L783.8,356.9 L784.3,357.7 L784.8,358.4 L785.3,359.2 L785.9,360.1 L786.4,361.0 L786.9,362.0 L787.4,363.0 L787.9,364.1 L788.4,365.1 L788.9,366.3 L789.4,367.5 L790.0,368.7 L790.5,369.9 L791.0,371.2 L791.5,372.5 L792.0,373.9 L792.5,375.3 L793.0,376.7 L793.5,378.2 L794.1,379.7 L794.6,381.2 L795.1,382.7 L795.6,384.3 L796.1,385.9 L796.6,387.5 L797.1,389.1 L797.6,390.8 L798.1,392.4 L798.7,394.1 L799.2,395.8 L799.7,397.5 L800.2,399.2 L800.7,400.9 L801.2,402.6 L801.7,404.4 L802.2,406.1 L802.8,407.8 L803.3,409.6 L803.8,411.3 L804.3,413.0 L804.8,414.8 L805.3,416.5 L805.8,418.2 L806.3,419.9 L806.9,421.6 L807.4,423.2 L807.9,424.9 L808.4,426.5 L808.9,428.2 L809.4,429.8 L809.9,431.3 L810.4,432.9 L810.9,434.4 L811.5,435.9 L812.0,437.4 L812.5,438.8 L813.0,440.3 L813.5,441.6 L814.0,443.0 L814.5,444.3 L815.0,445.6 L815.6,446.8 L816.1,448.0 L816.6,449.2 L817.1,450.3 L817.6,451.4 L818.1,452.4 L818.6,453.4 L819.1,454.3 L819.7,455.2 L820.2,456.1 L820.7,456.9 L821.2,457.6 L821.7,458.3 L822.2,459.0 L822.7,459.6 L823.2,460.2 L823.7,460.7 L824.3,461.1 L824.8,461.5 L825.3,461.8 L825.8,462.1 L826.3,462.4 L826.8,462.5 L827.3,462.7 L827.8,462.7 L828.4,462.8 L828.9,462.7 L829.4,462.6 L829.9,462.5 L830.4,462.3 L830.9,462.0 L831.4,461.7 L831.9,461.3 L832.5,460.9 L833.0,460.5 L833.5,459.9 L834.0,459.4 L834.5,458.7 L835.0,458.1 L835.5,457.3 L836.0,456.6 L836.5,455.8 L837.1,454.9 L837.6,454.0 L838.1,453.0 L838.6,452.0 L839.1,450.9 L839.6,449.9 L840.1,448.7 L840.6,447.5 L841.2,446.3 L841.7,445.1 L842.2,443.8 L842.7,442.5 L843.2,441.1 L843.7,439.7 L844.2,438.3 L844.7,436.8 L845.3,435.3 L845.8,433.8 L846.3,432.3 L846.8,430.7 L847.3,429.1 L847.8,427.5 L848.3,425.9 L848.8,424.2 L849.3,422.6 L849.9,420.9 L850.4,419.2 L850.9,417.5 L851.4,415.8 L851.9,414.1 L852.4,412.4 L852.9,410.6 L853.4,408.9 L854.0,407.2 L854.5,405.4 L855.0,403.7 L855.5,402.0 L856.0,400.2 L856.5,398.5 L857.0,396.8 L857.5,395.1 L858.1,393.4 L858.6,391.8 L859.1,390.1 L859.6,388.5 L860.1,386.8 L860.6,385.2 L861.1,383.7 L861.6,382.1 L862.1,380.6 L862.7,379.1 L863.2,377.6 L863.7,376.2 L864.2,374.7 L864.7,373.4 L865.2,372.0 L865.7,370.7 L866.2,369.4 L866.8,368.2 L867.3,367.0 L867.8,365.8 L868.3,364.7 L868.8,363.6 L869.3,362.6 L869.8,361.6 L870.3,360.7 L870.9,359.8 L871.4,358.9 L871.9,358.1 L872.4,357.4 L872.9,356.7 L873.4,356.0 L873.9,355.4 L874.4,354.8 L874.9,354.3 L875.5,353.9 L876.0,353.5 L876.5,353.2 L877.0,352.9 L877.5,352.6 L878.0,352.5 L878.5,352.3 L879.0,352.3 L879.6,352.2 L880.1,352.3 L880.6,352.4 L881.1,352.5 L881.6,352.7 L882.1,353.0 L882.6,353.3 L883.1,353.7 L883.7,354.1 L884.2,354.5 L884.7,355.1 L885.2,355.6 L885.7,356.3 L886.2,356.9 L886.7,357.7 L887.2,358.4 L887.7,359.2 L888.3,360.1 L888.8,361.0 L889.3,362.0 L889.8,363.0 L890.3,364.1 L890.8,365.1 L891.3,366.3 L891.8,367.5 L892.4,368.7 L892.9,369.9 L893.4,371.2 L893.9,372.5 L894.4,373.9 L894.9,375.3 L895.4,376.7 L895.9,378.2 L896.5,379.7 L897.0,381.2 L897.5,382.7 L898.0,384.3 L898.5,385.9 L899.0,387.5 L899.5,389.1 L900.0,390.8 L900.5,392.4 L901.1,394.1 L901.6,395.8 L902.1,397.5 L902.6,399.2 L903.1,400.9 L903.6,402.6 L904.1,404.4 L904.6,406.1 L905.2,407.8 L905.7,409.6 L906.2,411.3 L906.7,413.0 L907.2,414.8 L907.7,416.5 L908.2,418.2 L908.7,419.9 L909.3,421.6 L909.8,423.2 L910.3,424.9 L910.8,426.5 L911.3,428.2 L911.8,429.8 L912.3,431.3 L912.8,432.9 L913.3,434.4 L913.9,435.9 L914.4,437.4 L914.9,438.8 L915.4,440.3 L915.9,441.6 L916.4,443.0 L916.9,444.3 L917.4,445.6 L918.0,446.8 L918.5,448.0 L919.0,449.2 L919.5,450.3 L920.0,451.4 L920.5,452.4 L921.0,453.4 L921.5,454.3 L922.1,455.2 L922.6,456.1 L923.1,456.9 L923.6,457.6 L924.1,458.3 L924.6,459.0 L925.1,459.6 L925.6,460.2 L926.1,460.7 L926.7,461.1 L927.2,461.5 L927.7,461.8 L928.2,462.1 L928.7,462.4 L929.2,462.5 L929.7,462.7 L930.2,462.7 L930.8,462.8 L931.3,462.7 L931.8,462.6 L932.3,462.5 L932.8,462.3 L933.3,462.0 L933.8,461.7 L934.3,461.3 L934.9,460.9 L935.4,460.5 L935.9,459.9 L936.4,459.4 L936.9,458.7 L937.4,458.1 L937.9,457.3 L938.4,456.6 L938.9,455.8 L939.5,454.9 L940.0,454.0 L940.5,453.0 L941.0,452.0 L941.5,450.9 L942.0,449.9 L942.5,448.7 L943.0,447.5 L943.6,446.3 L944.1,445.1 L944.6,443.8 L945.1,442.5 L945.6,441.1 L946.1,439.7 L946.6,438.3 L947.1,436.8 L947.7,435.3 L948.2,433.8 L948.7,432.3 L949.2,430.7 L949.7,429.1 L950.2,427.5 L950.7,425.9 L951.2,424.2 L951.7,422.6 L952.3,420.9 L952.8,419.2 L953.3,417.5 L953.8,415.8 L954.3,414.1 L954.8,412.4 L955.3,410.6 L955.8,408.9 L956.4,407.2 L956.9,405.4 L957.4,403.7 L957.9,402.0 L958.4,400.2 L958.9,398.5 L959.4,396.8 L959.9,395.1 L960.5,393.4 L961.0,391.8 L961.5,390.1 L962.0,388.5 L962.5,386.8 L963.0,385.2 L963.5,383.7 L964.0,382.1 L964.5,380.6 L965.1,379.1 L965.6,377.6 L966.1,376.2 L966.6,374.7 L967.1,373.4 L967.6,372.0 L968.1,370.7 L968.6,369.4 L969.2,368.2 L969.7,367.0 L970.2,365.8 L970.7,364.7 L971.2,363.6 L971.7,362.6 L972.2,361.6 L972.7,360.7 L973.3,359.8 L973.8,358.9 L974.3,358.1 L974.8,357.4 L975.3,356.7 L975.8,356.0 L976.3,355.4 L976.8,354.8 L977.3,354.3 L977.9,353.9 L978.4,353.5 L978.9,353.2 L979.4,352.9 L979.9,352.6 L980.4,352.5 L980.9,352.3 L981.4,352.3 L982.0,352.2 L982.5,352.3 L983.0,352.4 L983.5,352.5 L984.0,352.7 L984.5,353.0 L985.0,353.3 L985.5,353.7 L986.1,354.1 L986.6,354.5 L987.1,355.1 L987.6,355.6 L988.1,356.3 L988.6,356.9 L989.1,357.7 L989.6,358.4 L990.1,359.2 L990.7,360.1 L991.2,361.0 L991.7,362.0 L992.2,363.0 L992.7,364.1 L993.2,365.1 L993.7,366.3 L994.2,367.5 L994.8,368.7 L995.3,369.9 L995.8,371.2 L996.3,372.5 L996.8,373.9 L997.3,375.3 L997.8,376.7 L998.3,378.2 L998.9,379.7 L999.4,381.2 L999.9,382.7 L1000.4,384.3 L1000.9,385.9 L1001.4,387.5 L1001.9,389.1 L1002.4,390.8 L1002.9,392.4 L1003.5,394.1 L1004.0,395.8 L1004.5,397.5 L1005.0,399.2 L1005.5,400.9 L1006.0,402.6 L1006.5,404.4 L1007.0,406.1 L1007.6,407.8 L1008.1,409.6 L1008.6,411.3 L1009.1,413.0 L1009.6,414.8 L1010.1,416.5 L1010.6,418.2 L1011.1,419.9 L1011.7,421.6 L1012.2,423.2 L1012.7,424.9 L1013.2,426.5 L1013.7,428.2 L1014.2,429.8 L1014.7,431.3 L1015.2,432.9 L1015.7,434.4 L1016.3,435.9 L1016.8,437.4 L1017.3,438.8 L1017.8,440.3 L1018.3,441.6 L1018.8,443.0 L1019.3,444.3 L1019.8,445.6 L1020.4,446.8 L1020.9,448.0 L1021.4,449.2 L1021.9,450.3 L1022.4,451.4 L1022.9,452.4 L1023.4,453.4 L1023.9,454.3 L1024.5,455.2 L1025.0,456.1 L1025.5,456.9 L1026.0,457.6 L1026.5,458.3" fill="none" stroke="#a8161a" stroke-width="1.05" stroke-linejoin="round"/>
<text x="514" y="486.8" font-size="9.3" fill="#a8161a" stroke="#a8161a" stroke-width="0.2" text-anchor="start" textLength="34" lengthAdjust="spacingAndGlyphs" >v(1) (V)</text>
<text x="719" y="500" font-size="9" fill="#0c0c86" stroke="#0c0c86" stroke-width="0.2" text-anchor="middle" textLength="38" lengthAdjust="spacingAndGlyphs" >T (Secs)</text>
<rect x="26.5" y="150.5" width="216" height="54" fill="#ffff00" stroke="#101010" stroke-width="1"/>
<text x="28.7" y="164.9" font-size="16.6" fill="#33332a" stroke="#33332a" stroke-width="0" text-anchor="start" textLength="40.8" lengthAdjust="spacingAndGlyphs">OP27</text>
<text x="83.6" y="164.9" font-size="16.6" fill="#33332a" stroke="#33332a" stroke-width="0" text-anchor="start" textLength="43.7" lengthAdjust="spacingAndGlyphs">GBW:</text>
<text x="142.6" y="164.9" font-size="16.6" fill="#33332a" stroke="#33332a" stroke-width="0" text-anchor="start" textLength="42.6" lengthAdjust="spacingAndGlyphs">8MHz</text>
<text x="28.7" y="182.9" font-size="16.6" fill="#33332a" stroke="#33332a" stroke-width="0" text-anchor="start" textLength="5.2" lengthAdjust="spacingAndGlyphs">f</text>
<text x="41.8" y="182.9" font-size="16.6" fill="#33332a" stroke="#33332a" stroke-width="0" text-anchor="start" textLength="9" lengthAdjust="spacingAndGlyphs">=</text>
<text x="59.8" y="182.9" font-size="16.6" fill="#33332a" stroke="#33332a" stroke-width="0" text-anchor="start" textLength="48.9" lengthAdjust="spacingAndGlyphs">50kHz</text>
<text x="28.7" y="200.9" font-size="16.6" fill="#33332a" stroke="#33332a" stroke-width="0" text-anchor="start" textLength="44.6" lengthAdjust="spacingAndGlyphs">Ip_dc</text>
<text x="81" y="200.9" font-size="16.6" fill="#33332a" stroke="#33332a" stroke-width="0" text-anchor="start" textLength="9" lengthAdjust="spacingAndGlyphs">=</text>
<text x="98.6" y="200.9" font-size="16.6" fill="#33332a" stroke="#33332a" stroke-width="0" text-anchor="start" textLength="29.3" lengthAdjust="spacingAndGlyphs">2uA</text>
<text x="141.8" y="200.9" font-size="16.6" fill="#33332a" stroke="#33332a" stroke-width="0" text-anchor="start" textLength="44.1" lengthAdjust="spacingAndGlyphs">Ip_ac</text>
<text x="193.6" y="200.9" font-size="16.6" fill="#33332a" stroke="#33332a" stroke-width="0" text-anchor="start" textLength="9" lengthAdjust="spacingAndGlyphs">=</text>
<path d="M28.8,189.6 L33.2,189.6 M28.8,200.4 L33.2,200.4" stroke="#33332a" stroke-width="1" fill="none"/>
<path d="M141.8,189.6 L146.2,189.6 M141.8,200.4 L146.2,200.4" stroke="#33332a" stroke-width="1" fill="none"/>
<text x="205.4" y="200.9" font-size="16.6" fill="#33332a" stroke="#33332a" stroke-width="0" text-anchor="start" textLength="30.2" lengthAdjust="spacingAndGlyphs">1uA</text>
<rect x="147" y="283" width="31" height="51" fill="#5ee090"/>
<rect x="135" y="295" width="13" height="17" fill="#5ee090"/>
<text x="137" y="308" font-size="12.2" fill="#2a742a" stroke="#2a742a" stroke-width="0" text-anchor="start" textLength="10.8" lengthAdjust="spacingAndGlyphs">Ip</text>
<path d="M164.5,284 L164.5,333" fill="none" stroke="#1818a0" stroke-width="1" shape-rendering="crispEdges"/>
<circle cx="164.5" cy="307.5" r="11.5" fill="none" stroke="#1818a0" stroke-width="1.1"/>
<path d="M160,308.6 L169,308.6 L164.5,317.4 Z" fill="#1030e0" stroke="#1818a0" stroke-width="0.6"/>
<path d="M164.5,284.5 L188,284.5" fill="none" stroke="#2c7a2c" stroke-width="1" shape-rendering="crispEdges"/>
<path d="M164.5,332.5 L188,332.5" fill="none" stroke="#2c7a2c" stroke-width="1" shape-rendering="crispEdges"/>
<path d="M188,284.5 L212.5,284.5 L212.5,306" fill="none" stroke="#1818a0" stroke-width="1" shape-rendering="crispEdges"/>
<path d="M204,306.5 L221,306.5" fill="none" stroke="#1818a0" stroke-width="1" shape-rendering="crispEdges"/>
<path d="M204,310.5 L221,310.5" fill="none" stroke="#1818a0" stroke-width="1" shape-rendering="crispEdges"/>
<path d="M212.5,311 L212.5,332.5 L188,332.5" fill="none" stroke="#1818a0" stroke-width="1" shape-rendering="crispEdges"/>
<text x="225.8" y="303.9" font-size="12.2" fill="#2a742a" stroke="#2a742a" stroke-width="0" text-anchor="start" textLength="29" lengthAdjust="spacingAndGlyphs">12pF</text>
<text x="228.8" y="317.3" font-size="12.2" fill="#2a742a" stroke="#2a742a" stroke-width="0" text-anchor="start" textLength="10.5" lengthAdjust="spacingAndGlyphs">Ci</text>
<path d="M188.5,332 L188.5,344.5" fill="none" stroke="#1818a0" stroke-width="1" shape-rendering="crispEdges"/>
<path d="M180,344.5 L197,344.5" fill="none" stroke="#1818a0" stroke-width="1" shape-rendering="crispEdges"/>
<path d="M184,350.5 L193,350.5" fill="none" stroke="#1818a0" stroke-width="1" shape-rendering="crispEdges"/>
<path d="M188.5,284 L188.5,276.5 L262,276.5" fill="none" stroke="#2c7a2c" stroke-width="1" shape-rendering="crispEdges"/>
<path d="M252.5,276.5 L252.5,204.5 L308,204.5" fill="none" stroke="#2c7a2c" stroke-width="1" shape-rendering="crispEdges"/>
<path d="M357,204.5 L396.5,204.5 L396.5,300.5" fill="none" stroke="#2c7a2c" stroke-width="1" shape-rendering="crispEdges"/>
<path d="M345,300.5 L436.5,300.5" fill="none" stroke="#2c7a2c" stroke-width="1" shape-rendering="crispEdges"/>
<path d="M308.5,204 L308.5,196.5 L330,196.5" fill="none" stroke="#1818a0" stroke-width="1" shape-rendering="crispEdges"/>
<path d="M330.5,188 L330.5,205" fill="none" stroke="#1818a0" stroke-width="1" shape-rendering="crispEdges"/>
<path d="M334.5,188 L334.5,205" fill="none" stroke="#1818a0" stroke-width="1" shape-rendering="crispEdges"/>
<path d="M335,196.5 L356.5,196.5 L356.5,204" fill="none" stroke="#1818a0" stroke-width="1" shape-rendering="crispEdges"/>
<path d="M308.5,204 L308.5,220.5 L320,220.5" fill="none" stroke="#1818a0" stroke-width="1" shape-rendering="crispEdges"/>
<path d="M320,220.5 L322,216.5 L326,224.5 L330,216.5 L334,224.5 L338,216.5 L342,224.5 L344.5,220.5" fill="none" stroke="#1818a0" stroke-width="1.1" stroke-linejoin="round"/>
<path d="M344.5,220.5 L356.5,220.5 L356.5,204" fill="none" stroke="#1818a0" stroke-width="1" shape-rendering="crispEdges"/>
<text x="318.3" y="167" font-size="12.2" fill="#2a742a" stroke="#2a742a" stroke-width="0" text-anchor="start" textLength="33.2" lengthAdjust="spacingAndGlyphs">1.3pF</text>
<text x="324.8" y="181.5" font-size="12.2" fill="#2a742a" stroke="#2a742a" stroke-width="0" text-anchor="start" textLength="10.8" lengthAdjust="spacingAndGlyphs">Cf</text>
<text x="327" y="235.2" font-size="12.2" fill="#2a742a" stroke="#2a742a" stroke-width="0" text-anchor="start" textLength="10.8" lengthAdjust="spacingAndGlyphs">Rf</text>
<text x="315.6" y="245.8" font-size="12.2" fill="#2a742a" stroke="#2a742a" stroke-width="0" text-anchor="start" textLength="32" lengthAdjust="spacingAndGlyphs">1Meg</text>
<path d="M274.5,272.5 L274.5,328 L316,300.5 L274.5,272.5" fill="none" stroke="#1818a0" stroke-width="1.1" stroke-linejoin="round"/>
<path d="M316,300.5 L335,300.5" fill="none" stroke="#1818a0" stroke-width="1" shape-rendering="crispEdges"/>
<path d="M300.5,274 L300.5,290" fill="none" stroke="#1818a0" stroke-width="1" shape-rendering="crispEdges"/>
<path d="M300.5,311 L300.5,327" fill="none" stroke="#1818a0" stroke-width="1" shape-rendering="crispEdges"/>
<path d="M278,288.5 L282,288.5" fill="none" stroke="#1818a0" stroke-width="1" shape-rendering="crispEdges"/>
<path d="M278,312.5 L283,312.5" fill="none" stroke="#1818a0" stroke-width="1" shape-rendering="crispEdges"/>
<path d="M280.5,310 L280.5,315" fill="none" stroke="#1818a0" stroke-width="1" shape-rendering="crispEdges"/>
<path d="M274.5,324.5 L268.5,324.5 L268.5,335.5" fill="none" stroke="#1818a0" stroke-width="1" shape-rendering="crispEdges"/>
<path d="M260,335.5 L277,335.5" fill="none" stroke="#1818a0" stroke-width="1" shape-rendering="crispEdges"/>
<path d="M264,341.5 L273,341.5" fill="none" stroke="#1818a0" stroke-width="1" shape-rendering="crispEdges"/>
<path d="M293,272.5 L296,272.5" fill="none" stroke="#1818a0" stroke-width="1" shape-rendering="crispEdges"/>
<path d="M291,328.5 L296,328.5" fill="none" stroke="#1818a0" stroke-width="1" shape-rendering="crispEdges"/>
<path d="M293.5,326 L293.5,331" fill="none" stroke="#1818a0" stroke-width="1" shape-rendering="crispEdges"/>
<text x="309.4" y="285.6" font-size="12.2" fill="#2a742a" stroke="#2a742a" stroke-width="0" text-anchor="start" textLength="40.3" lengthAdjust="spacingAndGlyphs">OPA27</text>
<text x="300.2" y="266" font-size="12.2" fill="#b02626" stroke="#b02626" stroke-width="0" text-anchor="start" textLength="15.2" lengthAdjust="spacingAndGlyphs">VE</text>
<text x="300.2" y="329.7" font-size="12.2" fill="#b02626" stroke="#b02626" stroke-width="0" text-anchor="start" textLength="15.8" lengthAdjust="spacingAndGlyphs">VC</text>
<rect x="262.40000000000003" y="269.8" width="10.4" height="12.6" rx="4.6" ry="4.6" fill="#fff" stroke="#c424c4" stroke-width="1.1"/>
<text x="267.6" y="279.8" font-size="10.5" fill="#c424c4" stroke="#c424c4" stroke-width="0" text-anchor="middle">1</text>
<rect x="294.7" y="261.9" width="10.4" height="12.6" rx="4.6" ry="4.6" fill="#fff" stroke="#c424c4" stroke-width="1.1"/>
<text x="299.9" y="271.9" font-size="10.5" fill="#c424c4" stroke="#c424c4" stroke-width="0" text-anchor="middle">2</text>
<rect x="334.5" y="293.59999999999997" width="10.4" height="12.6" rx="4.6" ry="4.6" fill="#fff" stroke="#c424c4" stroke-width="1.1"/>
<text x="339.7" y="303.59999999999997" font-size="10.5" fill="#c424c4" stroke="#c424c4" stroke-width="0" text-anchor="middle">3</text>
<rect x="294.8" y="325.3" width="10.4" height="12.6" rx="4.6" ry="4.6" fill="#fff" stroke="#c424c4" stroke-width="1.1"/>
<text x="300" y="335.3" font-size="10.5" fill="#c424c4" stroke="#c424c4" stroke-width="0" text-anchor="middle">4</text>
<circle cx="188.5" cy="284.5" r="2.6" fill="#dd1010"/>
<circle cx="188.5" cy="332.5" r="2.6" fill="#dd1010"/>
<circle cx="252.5" cy="276.5" r="2.6" fill="#dd1010"/>
<circle cx="308.5" cy="204.5" r="2.6" fill="#dd1010"/>
<circle cx="356.5" cy="204.5" r="2.6" fill="#dd1010"/>
<circle cx="396.5" cy="300.5" r="2.6" fill="#dd1010"/>
<circle cx="436.5" cy="300.5" r="2.6" fill="#dd1010"/>
<text x="436.8" y="296.9" font-size="16.3" fill="#2a742a" stroke="#2a742a" stroke-width="0" text-anchor="start" textLength="9.4" lengthAdjust="spacingAndGlyphs">V</text>
<text x="447.5" y="296.9" font-size="16.3" fill="#2a742a" stroke="#2a742a" stroke-width="0" text-anchor="start" textLength="9" lengthAdjust="spacingAndGlyphs">o</text>
<defs><pattern id="dith" width="2" height="2" patternUnits="userSpaceOnUse"><rect width="2" height="2" fill="#ece9d8"/><rect x="0" y="0" width="1" height="1" fill="#fff"/><rect x="1" y="1" width="1" height="1" fill="#fff"/></pattern></defs>
<rect x="0" y="26" width="462" height="1" fill="#fff" />
<rect x="5" y="53" width="457" height="1" fill="#aca899"/>
<rect x="5" y="54" width="457" height="1" fill="#fff"/>
<rect x="5" y="79" width="457" height="1" fill="#aca899"/>
<rect x="5" y="80" width="457" height="1" fill="#fff"/>
<rect x="3" y="30" width="22" height="20" fill="url(#dith)" shape-rendering="crispEdges"/>
<path d="M3.5,49.5 L3.5,30.5 L24.5,30.5" fill="none" stroke="#aca899" stroke-width="1"/>
<path d="M3.5,49.5 L24.5,49.5 L24.5,30.5" fill="none" stroke="#fff" stroke-width="1"/>
<path d="M11.0,35.0 L11.0,46.0 L13.6,43.6 L15.6,48.0 L17.4,47.2 L15.4,42.9 L19.0,42.9Z" fill="#000"/>
<path d="M29,40.5 L31.2,38.3 L35.2,42.8 L39.4,38.3 L43.2,42.8 L45,40.6" fill="none" stroke="#000" stroke-width="0.95" />
<path d="M52.9,34.0 L67.1,34.0 L67.1,37.2 L66.3,37.2 L65.5,36.1 L61.5,36.1 L61.5,45.3 L63.5,45.9 L63.5,47.0 L56.8,47.0 L56.8,45.9 L58.6,45.3 L58.6,36.1 L54.5,36.1 L53.7,37.2 L52.9,37.2Z" fill="#000"/>
<rect x="75" y="34" width="3.4" height="3.2" fill="#000" />
<path d="M77,35.8 L84,35.8 L84,45.6 L90.2,45.6" fill="none" stroke="#000" stroke-width="1.4" />
<rect x="98" y="33" width="3.2" height="3.3" fill="#000" />
<path d="M100,35 L113,47.6" fill="none" stroke="#000" stroke-width="1.2" />
<rect x="122.9" y="33.7" width="12.8" height="12" fill="#f3f352" stroke="#000" stroke-width="1.4" rx="1.6"/>
<rect x="124.8" y="35.5" width="9" height="3.8" fill="#ecece4" stroke="#8a8a60" stroke-width="0.6" />
<path d="M125.6,37.8 q1.4,-1.6 2.8,0 M130.2,37.8 q1.4,-1.6 2.8,0" fill="none" stroke="#000" stroke-width="0.9" />
<path d="M125.6,44.3 L133,44.3" fill="none" stroke="#000" stroke-width="1" />
<rect x="124.6" y="41" width="1.6" height="1" fill="#c8c830" />
<rect x="132.4" y="41" width="1.6" height="1" fill="#c8c830" />
<rect x="123" y="45.8" width="3.2" height="2" fill="#000" />
<rect x="132.4" y="45.8" width="3.2" height="2" fill="#000" />
<path d="M144,39.4 L150.8,33" fill="none" stroke="#000" stroke-width="1.1" />
<rect x="153.6" y="33.4" width="6.2" height="5.6" fill="#fff" stroke="#000" stroke-width="1" />
<path d="M147.5,41 L151,44.5 L147.5,48 L144,44.5 Z" fill="#fff" stroke="#000" stroke-width="1" />
<circle cx="156.7" cy="44.6" r="3.3" fill="#fff" stroke="#000" stroke-width="1"/>
<path d="M167.89999999999998,40.2 L173.5,40.2 L170.7,43.2 Z" fill="#000"/>
<rect x="180.6" y="33.9" width="13" height="7.6" fill="#fff" stroke="#000" stroke-width="1.2" />
<path d="M180.4,33.3 L180.4,47.8" fill="none" stroke="#000" stroke-width="1.4" />
<circle cx="209.5" cy="35.5" r="2.8" fill="#000"/>
<path d="M205.4,38.8 L211.8,38.8 L211.8,45.6 L213.2,46 L213.2,47.8 L205,47.8 L205,46 L207.2,45.6 L207.2,40.6 L205.4,40.4Z" fill="#000" stroke="none" stroke-width="0" />
<path d="M227.0,33.3 L227.0,44.3 L229.6,41.9 L231.6,46.3 L233.4,45.5 L231.4,41.2 L235.0,41.2Z" fill="#000"/>
<text x="238" y="45" font-size="17.4" fill="#141478" font-family="Liberation Serif" font-weight="bold" text-anchor="middle" textLength="8.6" lengthAdjust="spacingAndGlyphs" stroke="#141478" stroke-width="0.8">?</text>
<circle cx="254.6" cy="38" r="5.3" fill="#1840c8" stroke="#101850" stroke-width="0.8"/>
<path d="M251,35 q2,-3 4.5,-1.5 q1.5,2 -0.5,4 q-2.5,1 -4,-2.5Z" fill="#28a038" stroke="none" stroke-width="0" />
<path d="M256.5,38 q2,-0.5 2.5,1.5 l-2,1.5Z" fill="#28a038" stroke="none" stroke-width="0" />
<rect x="253.9" y="39" width="7.4" height="8" fill="#fff" stroke="#202040" stroke-width="1.1" />
<path d="M255.4,41.6 L259.8,41.6 M255.4,43.6 L259.8,43.6 M255.4,45.4 L259.8,45.4" fill="none" stroke="#2030a0" stroke-width="0.9" />
<path d="M259.5,34.6 q2.8,-1.6 4.2,1.2" fill="none" stroke="#c01818" stroke-width="1.2" />
<path d="M262.2,37.4 L265,37 L264.4,34.2Z" fill="#c01818" stroke="none" stroke-width="0" />
<rect x="272.7" y="33.7" width="15" height="13.6" fill="#ece9d8" stroke="#000" stroke-width="1.5" />
<circle cx="277.3" cy="38.2" r="3.7" fill="#168a16"/>
<rect x="276.8" y="35.8" width="1.1" height="3" fill="#fff" />
<rect x="276.8" y="39.6" width="1.1" height="1.1" fill="#fff" />
<circle cx="282.6" cy="42.8" r="3.7" fill="#e01414"/>
<path d="M281.3,41.5 L283.9,44.1 M283.9,41.5 L281.3,44.1" fill="none" stroke="#fff" stroke-width="1.1" />
<rect x="294" y="32" width="1" height="17" fill="#aca899"/>
<rect x="295" y="32" width="1" height="17" fill="#fff"/>
<rect x="3" y="56" width="22" height="20" fill="url(#dith)" shape-rendering="crispEdges"/>
<path d="M3.5,75.5 L3.5,56.5 L24.5,56.5" fill="none" stroke="#aca899" stroke-width="1"/>
<path d="M3.5,75.5 L24.5,75.5 L24.5,56.5" fill="none" stroke="#fff" stroke-width="1"/>
<rect x="26" y="56" width="22" height="20" fill="url(#dith)" shape-rendering="crispEdges"/>
<path d="M26.5,75.5 L26.5,56.5 L47.5,56.5" fill="none" stroke="#aca899" stroke-width="1"/>
<path d="M26.5,75.5 L47.5,75.5 L47.5,56.5" fill="none" stroke="#fff" stroke-width="1"/>
<rect x="49" y="56" width="22" height="20" fill="url(#dith)" shape-rendering="crispEdges"/>
<path d="M49.5,75.5 L49.5,56.5 L70.5,56.5" fill="none" stroke="#aca899" stroke-width="1"/>
<path d="M49.5,75.5 L70.5,75.5 L70.5,56.5" fill="none" stroke="#fff" stroke-width="1"/>
<text x="14.5" y="70.2" font-size="7.2" fill="#000" font-family="Liberation Mono" font-weight="bold" text-anchor="middle" textLength="15.6" lengthAdjust="spacingAndGlyphs" >TEXT</text>
<text x="38.2" y="66.9" font-size="6.6" fill="#000" font-family="Liberation Mono" font-weight="bold" text-anchor="middle" textLength="7.2" lengthAdjust="spacingAndGlyphs" >R1</text>
<path d="M30,70.6 L32.2,68.4 L36.2,72.8 L40.2,68.4 L44.2,72.8 L46.2,70.6" fill="none" stroke="#000" stroke-width="0.95" />
<rect x="53.8" y="62.8" width="7.6" height="7.6" fill="#fff" stroke="#000" stroke-width="1.4" />
<text x="57.5" y="69.2" font-size="7" fill="#000" font-family="Liberation Sans" font-weight="bold" text-anchor="middle" stroke="#000" stroke-width="0.3">1</text>
<path d="M56.6,70.6 L56.6,75" fill="none" stroke="#000" stroke-width="1.2" />
<path d="M61.6,64 L65.8,69.4 L69,65.8" fill="none" stroke="#000" stroke-width="1" />
<text x="82" y="65.8" font-size="7.4" fill="#fff" font-family="Liberation Mono" font-weight="bold" text-anchor="middle" textLength="11.4" lengthAdjust="spacingAndGlyphs" >VIP</text>
<text x="81.4" y="65.2" font-size="7.4" fill="#a4a090" font-family="Liberation Mono" font-weight="bold" text-anchor="middle" textLength="11.4" lengthAdjust="spacingAndGlyphs" >VIP</text>
<path d="M77.8,69.8 L81.8,73.8 L91.6,62.8" fill="none" stroke="#fff" stroke-width="2" />
<path d="M77,69 L81,73 L91,62" fill="none" stroke="#a4a090" stroke-width="2.1" />
<path d="M98.8,66.4 L104.39999999999999,66.4 L101.6,69.4 Z" fill="#aca899"/>
<rect x="111.8" y="62.2" width="9.8" height="7.6" fill="#fff" stroke="#8c1c1c" stroke-width="1.4" />
<text x="116.8" y="68.6" font-size="7" fill="#000" font-family="Liberation Sans" font-weight="bold" text-anchor="middle" textLength="7.2" lengthAdjust="spacingAndGlyphs" stroke="#000" stroke-width="0.3">13</text>
<path d="M116.6,70.2 L116.6,74.4" fill="none" stroke="#000" stroke-width="1.2" />
<path d="M122,70 L126.6,65.4" fill="none" stroke="#000" stroke-width="1" />
<path d="M135.2,63.3 L147,63.3" fill="none" stroke="#1010d0" stroke-width="1.4" />
<path d="M145,60.4 L149,63.3 L145,66.2Z" fill="#1010d0" stroke="none" stroke-width="0" />
<path d="M135.2,70.3 L148.8,70.3" fill="none" stroke="#000" stroke-width="1.2" />
<path d="M139.4,67.6 L139.4,73.0 L143.0,70.3 Z" fill="#000" stroke="#000" stroke-width="0.4" />
<path d="M143.6,67.5 L143.6,73.1" fill="none" stroke="#000" stroke-width="1.3" />
<path d="M158.4,59.8 q2.6,-0.2 4.8,1.6" fill="none" stroke="#9a9a92" stroke-width="2" />
<circle cx="164.5" cy="64.8" r="3.3" fill="#f8f030"/>
<circle cx="164.5" cy="66" r="1.7" fill="#e02810"/>
<path d="M158.4,70.3 L172,70.3" fill="none" stroke="#000" stroke-width="1.2" />
<path d="M162.6,67.6 L162.6,73.0 L166.2,70.3 Z" fill="#000" stroke="#000" stroke-width="0.4" />
<path d="M166.79999999999998,67.5 L166.79999999999998,73.1" fill="none" stroke="#000" stroke-width="1.3" />
<text x="188.3" y="66.7" font-size="9.1" fill="#1616a8" font-family="Liberation Sans" font-weight="bold" text-anchor="middle" textLength="12.6" lengthAdjust="spacingAndGlyphs" >ON</text>
<path d="M181.6,70.3 L195,70.3" fill="none" stroke="#000" stroke-width="1.2" />
<path d="M185.70000000000002,67.6 L185.70000000000002,73.0 L189.3,70.3 Z" fill="#000" stroke="#000" stroke-width="0.4" />
<path d="M189.9,67.5 L189.9,73.1" fill="none" stroke="#000" stroke-width="1.3" />
<rect x="203.2" y="65" width="3" height="3" fill="#000" />
<rect x="216.2" y="65" width="3" height="3" fill="#000" />
<path d="M205,66.5 L217,66.5" fill="none" stroke="#000" stroke-width="1.2" />
<rect x="226" y="60" width="1.1" height="1.1" fill="#111" shape-rendering="crispEdges"/>
<rect x="226" y="63" width="1.1" height="1.1" fill="#111" shape-rendering="crispEdges"/>
<rect x="226" y="66" width="1.1" height="1.1" fill="#111" shape-rendering="crispEdges"/>
<rect x="226" y="69" width="1.1" height="1.1" fill="#111" shape-rendering="crispEdges"/>
<rect x="226" y="72" width="1.1" height="1.1" fill="#111" shape-rendering="crispEdges"/>
<rect x="230" y="60" width="1.1" height="1.1" fill="#111" shape-rendering="crispEdges"/>
<rect x="230" y="63" width="1.1" height="1.1" fill="#111" shape-rendering="crispEdges"/>
<rect x="230" y="66" width="1.1" height="1.1" fill="#111" shape-rendering="crispEdges"/>
<rect x="230" y="69" width="1.1" height="1.1" fill="#111" shape-rendering="crispEdges"/>
<rect x="230" y="72" width="1.1" height="1.1" fill="#111" shape-rendering="crispEdges"/>
<rect x="234" y="60" width="1.1" height="1.1" fill="#111" shape-rendering="crispEdges"/>
<rect x="234" y="63" width="1.1" height="1.1" fill="#111" shape-rendering="crispEdges"/>
<rect x="234" y="66" width="1.1" height="1.1" fill="#111" shape-rendering="crispEdges"/>
<rect x="234" y="69" width="1.1" height="1.1" fill="#111" shape-rendering="crispEdges"/>
<rect x="234" y="72" width="1.1" height="1.1" fill="#111" shape-rendering="crispEdges"/>
<rect x="238" y="60" width="1.1" height="1.1" fill="#111" shape-rendering="crispEdges"/>
<rect x="238" y="63" width="1.1" height="1.1" fill="#111" shape-rendering="crispEdges"/>
<rect x="238" y="66" width="1.1" height="1.1" fill="#111" shape-rendering="crispEdges"/>
<rect x="238" y="69" width="1.1" height="1.1" fill="#111" shape-rendering="crispEdges"/>
<rect x="238" y="72" width="1.1" height="1.1" fill="#111" shape-rendering="crispEdges"/>
<rect x="242" y="60" width="1.1" height="1.1" fill="#111" shape-rendering="crispEdges"/>
<rect x="242" y="63" width="1.1" height="1.1" fill="#111" shape-rendering="crispEdges"/>
<rect x="242" y="66" width="1.1" height="1.1" fill="#111" shape-rendering="crispEdges"/>
<rect x="242" y="69" width="1.1" height="1.1" fill="#111" shape-rendering="crispEdges"/>
<rect x="242" y="72" width="1.1" height="1.1" fill="#111" shape-rendering="crispEdges"/>
<path d="M249.6,66.2 L255.20000000000002,66.2 L252.4,69.2 Z" fill="#000"/>
<rect x="262.7" y="60.1" width="14.4" height="12.8" fill="none" stroke="#000" stroke-width="1.5" />
<rect x="269.4" y="68.2" width="7.7" height="4.7" fill="none" stroke="#000" stroke-width="1.2" />
<path d="M269.4,70.4 L277,70.4" fill="none" stroke="#000" stroke-width="1" />
<path d="M289,59.8 L290.6,59.8 L290.6,62 L293.4,62 L294.8,64 L292.2,66 L294,67.6 M289.4,73.6 L289.4,70.2 L293.2,70.2 L294.2,69" fill="none" stroke="#000" stroke-width="1.2" />
<path d="M293.8,65.8 L293.8,72.8 L295.5,71.3 L296.7,74.1 L297.9,73.6 L296.6,70.9 L298.9,70.9Z" fill="#000"/>
<rect x="307" y="58" width="1" height="17" fill="#aca899"/>
<rect x="308" y="58" width="1" height="17" fill="#fff"/>
<rect x="314.0" y="64.9" width="10.8" height="8.2" fill="#fff" stroke="#000" stroke-width="1.3" />
<rect x="316" y="69" width="2" height="1" fill="#111" shape-rendering="crispEdges"/>
<rect x="319" y="69" width="4" height="1" fill="#111" shape-rendering="crispEdges"/>
<rect x="316" y="71" width="2" height="1" fill="#111" shape-rendering="crispEdges"/>
<rect x="319" y="71" width="4" height="1" fill="#111" shape-rendering="crispEdges"/>
<path d="M316.0,65.6 L320.90000000000003,60.6 L326.2,61.2 L326.90000000000003,63.6 L321.7,67.6 Z" fill="#f0f0f0" stroke="#222" stroke-width="0.9" />
<path d="M318.3,64.6 L321.3,66.2 M319.90000000000003,63 L322.90000000000003,64.8 M321.5,61.6 L324.5,63.4" fill="none" stroke="#666" stroke-width="0.6" />
<rect x="327.0" y="60.1" width="2.5" height="6.4" fill="#10107c" />
<rect x="336" y="58" width="1" height="17" fill="#aca899"/>
<rect x="337" y="58" width="1" height="17" fill="#fff"/>
<rect x="342.5" y="60.7" width="9.4" height="7.8" fill="none" stroke="#000" stroke-width="1.5" />
<rect x="347" y="65" width="9" height="7" fill="none" stroke="#000" stroke-width="1.5" />
<rect x="341.2" y="59.4" width="2.6" height="2.6" fill="#000" />
<rect x="350.6" y="59.4" width="2.6" height="2.6" fill="#000" />
<rect x="341.2" y="67.2" width="2.6" height="2.6" fill="#000" />
<rect x="354.8" y="63.7" width="2.6" height="2.6" fill="#000" />
<rect x="345.8" y="70.8" width="2.6" height="2.6" fill="#000" />
<rect x="354.8" y="70.8" width="2.6" height="2.6" fill="#000" />
<rect x="345.8" y="63.7" width="2.6" height="2.6" fill="#000" />
<rect x="350.6" y="67.2" width="2.6" height="2.6" fill="#000" />
<path d="M365.2,66.6 L378.8,66.6" fill="none" stroke="#000" stroke-width="1.2" />
<path d="M366.4,63 L366.4,70.2 L371.6,66.6Z" fill="#000" stroke="none" stroke-width="0" />
<path d="M377.6,63 L377.6,70.2 L372.4,66.6Z" fill="#000" stroke="none" stroke-width="0" />
<path d="M390.2,62 A6,6 0 1 1 389.4,71" fill="none" stroke="#000" stroke-width="1.3" />
<path d="M388,60.2 L392.6,60.8 L389,64.6Z" fill="#000" stroke="none" stroke-width="0" />
<rect x="393.8" y="66.2" width="1.4" height="1.4" fill="#000" />
<rect x="419.2" y="59" width="1" height="15" fill="#c8c8c0" />
<path d="M421,63.8 C414,63.6 410,66 413,69.4" fill="none" stroke="#000" stroke-width="1.3" />
<path d="M422.2,61 L425.8,63.8 L422.2,66.6Z" fill="#000" stroke="none" stroke-width="0" />
<path d="M414.4,70.6 C417,72 421,71.6 425,70.2" fill="none" stroke="#000" stroke-width="1.2" stroke-dasharray="2 1.4"/>
<rect x="433" y="64.6" width="16" height="1" fill="#c8c8c0" />
<path d="M437.6,62 L437.6,68.4 C437.6,73.2 445,73.2 445,68.4" fill="none" stroke="#000" stroke-width="1.3" />
<path d="M434.8,63.6 L437.6,60 L440.4,63.6Z" fill="#000" stroke="none" stroke-width="0" />
<path d="M445,67 L446.4,61.4" fill="none" stroke="#000" stroke-width="1.2" stroke-dasharray="2 1.4"/>
<rect x="455" y="58" width="1" height="17" fill="#aca899"/>
<rect x="456" y="58" width="1" height="17" fill="#fff"/>
<path d="M8.8,86.0 L10.5,86.0 L10.5,88.4 L12.8,88.4 L12.8,86.0 L14.4,86.0 L14.4,87.0 L16.2,90.2 L16.2,93.6 L12.8,93.6 L12.8,90.9 L10.5,90.9 L10.5,93.6 L7.0,93.6 L7.0,90.2 L8.8,87.0Z" fill="#000"/>
<rect x="8.0" y="90.4" width="0.6" height="1.9" fill="#fff" />
<rect x="9.3" y="87.7" width="0.5" height="1.3" fill="#fff" />
<rect x="12.6" y="89.1" width="0.5" height="1.8" fill="#fff" />
<rect x="14.0" y="91.6" width="0.6" height="1.4" fill="#fff" />
<rect x="8.3" y="88.6" width="0.5" height="0.8" fill="#fff" />
<path d="M9,97.7 L10.4,97.7 L12,96.4 L14,99 L16,96.4 L18,99 L19.2,97.7 L20.4,97.7" fill="none" stroke="#1010a8" stroke-width="0.9" />
<path d="M31.8,86.0 L34.6,86.0 L34.6,90.0 L38.4,90.0 L38.4,86.0 L41.2,86.0 L41.2,87.6 L44.2,93.0 L44.2,98.6 L38.4,98.6 L38.4,94.2 L34.6,94.2 L34.6,98.6 L28.8,98.6 L28.8,93.0 L31.8,87.6Z" fill="#000"/>
<rect x="30.4" y="93.4" width="1.0" height="3.2" fill="#fff" />
<rect x="32.7" y="88.8" width="0.9" height="2.2" fill="#fff" />
<rect x="38.2" y="91.2" width="0.9" height="3.0" fill="#fff" />
<rect x="40.4" y="95.4" width="1.0" height="2.4" fill="#fff" />
<rect x="31.0" y="90.4" width="0.8" height="1.4" fill="#fff" />
<rect x="51" y="84" width="1" height="17" fill="#aca899"/>
<rect x="52" y="84" width="1" height="17" fill="#fff"/>
<rect x="58.3" y="86.3" width="13.4" height="9.4" fill="none" stroke="#aca899" stroke-width="2" />
<path d="M60.6,89.4 L63.4,89.4 M66.6,89.4 L70,89.4 M60.6,92 L70,92 M65,86 L65,95" fill="none" stroke="#aca899" stroke-width="1.3" />
<path d="M65.2,95.4 L65.2,97.8 M61.2,99.8 L65.2,97.4 L69.2,99.8" fill="none" stroke="#aca899" stroke-width="1.6" />
<path d="M59.2,96.2 L73.2,96.2 M73.2,87 L73.2,96" fill="none" stroke="#fff" stroke-width="1" />
<rect x="79" y="84" width="1" height="17" fill="#aca899"/>
<rect x="80" y="84" width="1" height="17" fill="#fff"/>
<circle cx="93.6" cy="92.3" r="7" fill="#12861a" stroke="#083808" stroke-width="1"/>
<rect x="92.8" y="87.6" width="1.8" height="6" fill="#fff" rx="0.8"/>
<circle cx="93.7" cy="96" r="1.1" fill="#fff"/>
<circle cx="116.3" cy="92.3" r="7" fill="#e01212" stroke="#7a0808" stroke-width="1"/>
<path d="M113.4,89.4 L119.2,95.2 M119.2,89.4 L113.4,95.2" fill="none" stroke="#fff" stroke-width="2" />
<rect x="130" y="84" width="1" height="17" fill="#aca899"/>
<rect x="131" y="84" width="1" height="17" fill="#fff"/>
<rect x="136.7" y="85.9" width="6" height="6" fill="#a8a89c" stroke="#222" stroke-width="1" />
<rect x="144.6" y="92.6" width="6" height="6" fill="#a8a89c" stroke="#222" stroke-width="1" />
<rect x="139.6" y="87.6" width="8.4" height="7.6" fill="#f4f478" stroke="#222" stroke-width="1" />
<rect x="162.8" y="88.6" width="8" height="7" fill="#f4f478" stroke="#222" stroke-width="1" />
<rect x="159.4" y="85.9" width="6" height="6" fill="#a8a89c" stroke="#222" stroke-width="1" />
<rect x="167.8" y="92.6" width="6" height="6" fill="#a8a89c" stroke="#222" stroke-width="1" />
<rect x="181" y="84" width="1" height="17" fill="#aca899"/>
<rect x="182" y="84" width="1" height="17" fill="#fff"/>
<circle cx="194.1" cy="90.5" r="5.3" fill="#d0f2f2" stroke="#000" stroke-width="1.5"/>
<path d="M198.1,94.9 L202.2,99.2" fill="none" stroke="#000" stroke-width="2.0" stroke-linecap="round"/>
<path d="M190.9,90.5 L197.29999999999998,90.5" fill="none" stroke="#000" stroke-width="2" />
<path d="M194.1,87.3 L194.1,93.7" fill="none" stroke="#000" stroke-width="2" />
<circle cx="217.1" cy="90.5" r="5.3" fill="#d0f2f2" stroke="#000" stroke-width="1.5"/>
<path d="M221.1,94.9 L225.2,99.2" fill="none" stroke="#000" stroke-width="2.0" stroke-linecap="round"/>
<path d="M213.9,90.5 L220.29999999999998,90.5" fill="none" stroke="#000" stroke-width="2" />
<rect x="232" y="84" width="1" height="17" fill="#aca899"/>
<rect x="233" y="84" width="1" height="17" fill="#fff"/>
<path d="M240.6,99.4 L255,99.4 L255,89.4" fill="none" stroke="#fff" stroke-width="1" />
<path d="M239.8,98.6 L239.8,88.4 L242,86.6 L246.6,86.6 L248,88.6 L254.2,88.6 L254.2,98.6Z" fill="#cac7b6" stroke="#b6b3a2" stroke-width="1" />
<circle cx="246.6" cy="93.6" r="1.6" fill="#eceadb"/>
<rect x="260" y="84" width="1" height="17" fill="#aca899"/>
<rect x="261" y="84" width="1" height="17" fill="#fff"/>
<path d="M268,92 C268,86 280,84.6 281,92 C281.6,98.6 276,100.4 272.4,99 C270.6,98 273,95.6 270.4,95 C268.6,94.6 268,93.6 268,92Z" fill="#efe58a" stroke="#000" stroke-width="1.7" />
<circle cx="272.4" cy="89.6" r="1.1" fill="#20a040"/>
<circle cx="276.2" cy="88.4" r="1.1" fill="#2040d0"/>
<circle cx="278.6" cy="91.4" r="1.1" fill="#d02020"/>
<circle cx="277.6" cy="95.2" r="1.1" fill="#20a040"/>
<circle cx="274.4" cy="96.6" r="1" fill="#d02020"/>
<circle cx="271.4" cy="92.4" r="0.9" fill="#2040d0"/>
<path d="M290.0,85.0 L303.2,85.0 L303.2,88.0 L302.3,88.0 L301.6,86.2 L294.3,86.2 L294.3,91.2 L298.6,91.2 L299.2,90.0 L300.0,90.0 L300.0,94.0 L299.2,94.0 L298.6,92.4 L294.3,92.4 L294.3,97.4 L297.0,97.9 L297.0,99.0 L290.0,99.0 L290.0,97.9 L291.9,97.4 L291.9,86.6 L290.0,86.1Z" fill="#000"/>
<rect x="466" y="24" width="588" height="1" fill="#fff" />
<rect x="471" y="52" width="583" height="1" fill="#aca899"/>
<rect x="471" y="53" width="583" height="1" fill="#fff"/>
<rect x="471" y="78" width="583" height="1" fill="#aca899"/>
<rect x="471" y="79" width="583" height="1" fill="#fff"/>
<path d="M476.0,33.2 L476.0,44.2 L478.6,41.8 L480.6,46.2 L482.4,45.4 L480.4,41.1 L484.0,41.1Z" fill="#000"/>
<path d="M495.3,38.6 L502.2,32.2" fill="none" stroke="#000" stroke-width="1.1" />
<rect x="505.2" y="32.6" width="5.6" height="5.6" fill="#fff" stroke="#000" stroke-width="1" />
<path d="M498.7,40.2 L502.1,43.6 L498.7,47 L495.3,43.6 Z" fill="#fff" stroke="#000" stroke-width="1" />
<circle cx="507.8" cy="43.7" r="3.2" fill="#fff" stroke="#000" stroke-width="1"/>
<path d="M518.7,39 L524.3,39 L521.5,42 Z" fill="#000"/>
<rect x="528" y="29" width="22" height="20" fill="url(#dith)" shape-rendering="crispEdges"/>
<path d="M528.5,48.5 L528.5,29.5 L549.5,29.5" fill="none" stroke="#aca899" stroke-width="1"/>
<path d="M528.5,48.5 L549.5,48.5 L549.5,29.5" fill="none" stroke="#fff" stroke-width="1"/>
<path d="M532.5,43.4 L532.5,34.5 L545.6,34.5 L545.6,43.4" fill="none" stroke="#222" stroke-width="1.1" stroke-dasharray="1.2 1.2"/>
<path d="M532.2,44.2 C534,47 537.6,47 539.4,43.4 C541,40 542.4,36.2 544.8,36.2 C546.4,36.2 547.4,37.6 548,39" fill="none" stroke="#18189c" stroke-width="1.1" />
<path d="M554.3,37.6 C555,34.6 555.8,33.6 556.8,33.6 L558.4,33.6 C559.6,33.8 560.6,39.4 562.6,39.6 C564.4,39.4 565.2,35 566.3,33.4 C567.4,35 568.4,38.6 569.6,39.8" fill="none" stroke="#18189c" stroke-width="1.2" />
<rect x="557" y="35" width="1.1" height="1.1" fill="#111" shape-rendering="crispEdges"/>
<rect x="557" y="37" width="1.1" height="1.1" fill="#111" shape-rendering="crispEdges"/>
<rect x="557" y="39" width="1.1" height="1.1" fill="#111" shape-rendering="crispEdges"/>
<rect x="566" y="35" width="1.1" height="1.1" fill="#111" shape-rendering="crispEdges"/>
<rect x="566" y="37" width="1.1" height="1.1" fill="#111" shape-rendering="crispEdges"/>
<rect x="566" y="39" width="1.1" height="1.1" fill="#111" shape-rendering="crispEdges"/>
<rect x="554" y="41.7" width="16" height="1.3" fill="#000" />
<rect x="556" y="44" width="5" height="1" fill="#111" shape-rendering="crispEdges"/>
<rect x="563" y="44" width="5" height="1" fill="#111" shape-rendering="crispEdges"/>
<rect x="556" y="46" width="5" height="1" fill="#111" shape-rendering="crispEdges"/>
<rect x="563" y="46" width="5" height="1" fill="#111" shape-rendering="crispEdges"/>
<path d="M576.8,33.4 L579.5,33.4 L579.5,36.4 L591.6,36.4 L591.6,33.4 L593,33.4" fill="none" stroke="#18189c" stroke-width="1.4" />
<rect x="579" y="38" width="1.1" height="1.1" fill="#111" shape-rendering="crispEdges"/>
<rect x="579" y="40" width="1.1" height="1.1" fill="#111" shape-rendering="crispEdges"/>
<rect x="579" y="42" width="1.1" height="1.1" fill="#111" shape-rendering="crispEdges"/>
<rect x="591" y="38" width="1.1" height="1.1" fill="#111" shape-rendering="crispEdges"/>
<rect x="591" y="40" width="1.1" height="1.1" fill="#111" shape-rendering="crispEdges"/>
<rect x="591" y="42" width="1.1" height="1.1" fill="#111" shape-rendering="crispEdges"/>
<path d="M579.4,44.4 L591.8,44.4" fill="none" stroke="#000" stroke-width="1.2" />
<path d="M581.4,42.8 L579.6,44.4 L581.4,46 M589.8,42.8 L591.6,44.4 L589.8,46" fill="none" stroke="#000" stroke-width="1.1" />
<path d="M583.2,42.8 L583.2,46" fill="none" stroke="#000" stroke-width="1.1" />
<rect x="585" y="43" width="2.8" height="2.8" fill="#ece9d8" stroke="#000" stroke-width="1.1" />
<path d="M602.5,32.4 L602.5,36.8 M602.5,43.2 L602.5,46.2" fill="none" stroke="#000" stroke-width="1.2" />
<path d="M600.6,34.6 L602.5,32 L604.4,34.6Z M600.6,44.2 L602.5,46.8 L604.4,44.2Z" fill="#000" stroke="none" stroke-width="0" />
<rect x="605" y="32" width="1.1" height="1.1" fill="#111" shape-rendering="crispEdges"/>
<rect x="607" y="32" width="1.1" height="1.1" fill="#111" shape-rendering="crispEdges"/>
<rect x="609" y="32" width="1.1" height="1.1" fill="#111" shape-rendering="crispEdges"/>
<rect x="611" y="32" width="1.1" height="1.1" fill="#111" shape-rendering="crispEdges"/>
<rect x="605" y="46" width="1.1" height="1.1" fill="#111" shape-rendering="crispEdges"/>
<rect x="607" y="46" width="1.1" height="1.1" fill="#111" shape-rendering="crispEdges"/>
<rect x="600.4" y="38.3" width="1.2" height="3.4" fill="#000" />
<rect x="602.6" y="38.8" width="2.2" height="2.4" fill="none" stroke="#000" stroke-width="1" />
<path d="M608.4,46.4 C610,42 611.4,37.6 612.4,34.4 C613,32.6 614.4,31.8 615,32.8 C615.4,33.4 615.6,34 615.7,34.6" fill="none" stroke="#18189c" stroke-width="1.2" />
<path d="M623.3,43.5 L627.4,43.5 L627.4,46.6 L633.1,46.6 L633.1,43.5 L638.8,43.5" fill="none" stroke="#18189c" stroke-width="1.2" />
<path d="M634,37.4 L629.6,41.8" fill="none" stroke="#000" stroke-width="1.1" />
<path d="M628.4,39.8 L628.4,43 L631.6,43Z" fill="#000" stroke="none" stroke-width="0" />
<rect x="632.2" y="32.3" width="1.2" height="3" fill="#000" />
<rect x="634.4" y="34.3" width="1" height="1" fill="#000" />
<rect x="636" y="32.8" width="2.4" height="2.1" fill="none" stroke="#000" stroke-width="1" />
<rect x="633.8" y="36.8" width="5.2" height="1.1" fill="#000" />
<text x="653.8" y="36.5" font-size="6.2" fill="#941010" font-family="Liberation Sans" font-weight="bold" text-anchor="middle" textLength="9.6" lengthAdjust="spacingAndGlyphs" stroke="#941010" stroke-width="0.3">F()</text>
<path d="M647.2,36 L647.2,40 M660.6,36 L660.6,40" fill="none" stroke="#000" stroke-width="1.1" />
<path d="M645.5,39.2 L648.9,39.2 L647.2,42.2Z M658.9,39.2 L662.3,39.2 L660.6,42.2Z" fill="#000" stroke="none" stroke-width="0" />
<path d="M649.8,44 C651.6,42 652.8,40.9 654,40.9 C655.4,40.9 656.8,42.2 658.6,44.4" fill="none" stroke="#18189c" stroke-width="1.2" />
<path d="M647.3,43 L647.3,46.4 L649.6,44.2 M660.6,43 L660.6,46.4 L658.8,44.6" fill="none" stroke="#18189c" stroke-width="1.1" stroke-dasharray="1.1 1"/>
<path d="M670.0,33.0 L684.2,33.0 L684.2,36.2 L683.4,36.2 L682.6,35.1 L678.6,35.1 L678.6,44.3 L680.6,44.9 L680.6,46.0 L673.9,46.0 L673.9,44.9 L675.7,44.3 L675.7,35.1 L671.6,35.1 L670.8,36.2 L670.0,36.2Z" fill="#000"/>
<rect x="691" y="30" width="1" height="18" fill="#aca899"/>
<rect x="692" y="30" width="1" height="18" fill="#fff"/>
<rect x="697.7" y="38.0" width="10.8" height="8.2" fill="#fff" stroke="#000" stroke-width="1.3" />
<rect x="700" y="42" width="2" height="1" fill="#111" shape-rendering="crispEdges"/>
<rect x="703" y="42" width="4" height="1" fill="#111" shape-rendering="crispEdges"/>
<rect x="700" y="44" width="2" height="1" fill="#111" shape-rendering="crispEdges"/>
<rect x="703" y="44" width="4" height="1" fill="#111" shape-rendering="crispEdges"/>
<path d="M699.7,38.7 L704.6,33.7 L709.9,34.300000000000004 L710.6,36.7 L705.4,40.7 Z" fill="#f0f0f0" stroke="#222" stroke-width="0.9" />
<path d="M702,37.7 L705,39.300000000000004 M703.6,36.1 L706.6,37.9 M705.2,34.7 L708.2,36.5" fill="none" stroke="#666" stroke-width="0.6" />
<rect x="710.7" y="33.2" width="2.5" height="6.4" fill="#10107c" />
<rect x="719" y="30" width="1" height="18" fill="#aca899"/>
<rect x="720" y="30" width="1" height="18" fill="#fff"/>
<path d="M727,34 L739.2,39.5 L727,45Z" fill="#000" stroke="none" stroke-width="0" />
<rect x="750" y="34.2" width="12" height="10.5" fill="#aca899" />
<rect x="774" y="34.2" width="4.2" height="10.5" fill="#aca899" />
<rect x="780.9" y="34.2" width="4.2" height="10.5" fill="#aca899" />
<rect x="793" y="30" width="1" height="18" fill="#aca899"/>
<rect x="794" y="30" width="1" height="18" fill="#fff"/>
<path d="M799,46.8 L811,34.5 L814.8,34.5" fill="none" stroke="#000" stroke-width="1.0" />
<circle cx="803.2" cy="42.6" r="1.2" fill="#000"/>
<circle cx="808.2" cy="37.6" r="1.2" fill="#000"/>
<path d="M823.4,45.4 L835.6,33.3" fill="none" stroke="#000" stroke-width="1.0" />
<rect x="822.1" y="44.1" width="2.6" height="2.6" fill="#ece9d8" stroke="#000" stroke-width="0.9" />
<rect x="828.1" y="38.1" width="2.6" height="2.6" fill="#ece9d8" stroke="#000" stroke-width="0.9" />
<rect x="834.3000000000001" y="31.999999999999996" width="2.6" height="2.6" fill="#ece9d8" stroke="#000" stroke-width="0.9" />
<rect x="844" y="30" width="1" height="18" fill="#aca899"/>
<rect x="845" y="30" width="1" height="18" fill="#fff"/>
<rect x="851.1" y="32.9" width="13.8" height="13" fill="none" stroke="#000" stroke-width="1.3" />
<path d="M852.6,34.4 L864,34.4 M852.6,44.6 L864,44.6" fill="none" stroke="#000" stroke-width="1.3" stroke-dasharray="0.9 1.3"/>
<path d="M852.6,35 L852.6,44.6 M863.6,35 L863.6,44.6" fill="none" stroke="#000" stroke-width="1.3" stroke-dasharray="0.9 1.3"/>
<rect x="873.7" y="32.9" width="14.2" height="13" fill="none" stroke="#000" stroke-width="1.2" />
<path d="M878.4,33 L878.4,46 M883.4,33 L883.4,46 M874,37.2 L888,37.2 M874,41.8 L888,41.8" fill="none" stroke="#000" stroke-width="0.55" />
<path d="M876.9,37.2 L879.9,37.2 M878.4,35.7 L878.4,38.7" fill="none" stroke="#000" stroke-width="1.1" />
<path d="M876.9,41.8 L879.9,41.8 M878.4,40.3 L878.4,43.3" fill="none" stroke="#000" stroke-width="1.1" />
<path d="M881.9,37.2 L884.9,37.2 M883.4,35.7 L883.4,38.7" fill="none" stroke="#000" stroke-width="1.1" />
<path d="M881.9,41.8 L884.9,41.8 M883.4,40.3 L883.4,43.3" fill="none" stroke="#000" stroke-width="1.1" />
<rect x="895" y="30" width="1" height="18" fill="#aca899"/>
<rect x="896" y="30" width="1" height="18" fill="#fff"/>
<rect x="898" y="29" width="22" height="20" fill="url(#dith)" shape-rendering="crispEdges"/>
<path d="M898.5,48.5 L898.5,29.5 L919.5,29.5" fill="none" stroke="#aca899" stroke-width="1"/>
<path d="M898.5,48.5 L919.5,48.5 L919.5,29.5" fill="none" stroke="#fff" stroke-width="1"/>
<rect x="921" y="29" width="22" height="20" fill="url(#dith)" shape-rendering="crispEdges"/>
<path d="M921.5,48.5 L921.5,29.5 L942.5,29.5" fill="none" stroke="#aca899" stroke-width="1"/>
<path d="M921.5,48.5 L942.5,48.5 L942.5,29.5" fill="none" stroke="#fff" stroke-width="1"/>
<rect x="944" y="29" width="22" height="20" fill="url(#dith)" shape-rendering="crispEdges"/>
<path d="M944.5,48.5 L944.5,29.5 L965.5,29.5" fill="none" stroke="#aca899" stroke-width="1"/>
<path d="M944.5,48.5 L965.5,48.5 L965.5,29.5" fill="none" stroke="#fff" stroke-width="1"/>
<rect x="902.6" y="33.4" width="13.9" height="13.9" fill="#fff" stroke="#000" stroke-width="1.3" />
<rect x="904" y="33.5" width="1" height="13.8" fill="#111" shape-rendering="crispEdges"/>
<rect x="906" y="33.5" width="1" height="13.8" fill="#111" shape-rendering="crispEdges"/>
<rect x="908" y="33.5" width="1" height="13.8" fill="#111" shape-rendering="crispEdges"/>
<rect x="910" y="33.5" width="1" height="13.8" fill="#111" shape-rendering="crispEdges"/>
<rect x="912" y="33.5" width="1" height="13.8" fill="#111" shape-rendering="crispEdges"/>
<rect x="914" y="33.5" width="1" height="13.8" fill="#111" shape-rendering="crispEdges"/>
<rect x="925.7" y="33.4" width="14.8" height="13.9" fill="#fff" stroke="#000" stroke-width="1.3" />
<rect x="926" y="35.2" width="14.4" height="1.1" fill="#111" shape-rendering="crispEdges"/>
<rect x="926" y="37.2" width="14.4" height="1.1" fill="#111" shape-rendering="crispEdges"/>
<rect x="926" y="40.2" width="14.4" height="1.1" fill="#111" shape-rendering="crispEdges"/>
<rect x="926" y="42.2" width="14.4" height="1.1" fill="#111" shape-rendering="crispEdges"/>
<rect x="926" y="44.2" width="14.4" height="1.1" fill="#111" shape-rendering="crispEdges"/>
<rect x="948.7" y="33.4" width="14.8" height="13.9" fill="#fff" stroke="#000" stroke-width="1.3" />
<rect x="955" y="35.2" width="1.1" height="1.1" fill="#111" shape-rendering="crispEdges"/>
<rect x="955" y="37.2" width="1.1" height="1.1" fill="#111" shape-rendering="crispEdges"/>
<rect x="955" y="40.2" width="1.1" height="1.1" fill="#111" shape-rendering="crispEdges"/>
<rect x="955" y="42.2" width="1.1" height="1.1" fill="#111" shape-rendering="crispEdges"/>
<rect x="955" y="44.2" width="1.1" height="1.1" fill="#111" shape-rendering="crispEdges"/>
<rect x="957" y="35.2" width="1.1" height="1.1" fill="#111" shape-rendering="crispEdges"/>
<rect x="957" y="37.2" width="1.1" height="1.1" fill="#111" shape-rendering="crispEdges"/>
<rect x="957" y="40.2" width="1.1" height="1.1" fill="#111" shape-rendering="crispEdges"/>
<rect x="957" y="42.2" width="1.1" height="1.1" fill="#111" shape-rendering="crispEdges"/>
<rect x="957" y="44.2" width="1.1" height="1.1" fill="#111" shape-rendering="crispEdges"/>
<rect x="959" y="35.2" width="1.1" height="1.1" fill="#111" shape-rendering="crispEdges"/>
<rect x="959" y="37.2" width="1.1" height="1.1" fill="#111" shape-rendering="crispEdges"/>
<rect x="959" y="40.2" width="1.1" height="1.1" fill="#111" shape-rendering="crispEdges"/>
<rect x="959" y="42.2" width="1.1" height="1.1" fill="#111" shape-rendering="crispEdges"/>
<rect x="959" y="44.2" width="1.1" height="1.1" fill="#111" shape-rendering="crispEdges"/>
<rect x="961" y="35.2" width="1.1" height="1.1" fill="#111" shape-rendering="crispEdges"/>
<rect x="961" y="37.2" width="1.1" height="1.1" fill="#111" shape-rendering="crispEdges"/>
<rect x="961" y="40.2" width="1.1" height="1.1" fill="#111" shape-rendering="crispEdges"/>
<rect x="961" y="42.2" width="1.1" height="1.1" fill="#111" shape-rendering="crispEdges"/>
<rect x="961" y="44.2" width="1.1" height="1.1" fill="#111" shape-rendering="crispEdges"/>
<rect x="970.8" y="32.8" width="14.4" height="13.4" fill="#f6f5ee" stroke="#000" stroke-width="1.3" />
<rect x="976" y="34" width="1.1" height="1.1" fill="#111" shape-rendering="crispEdges"/>
<rect x="976" y="36" width="1.1" height="1.1" fill="#111" shape-rendering="crispEdges"/>
<rect x="976" y="39" width="1.1" height="1.1" fill="#111" shape-rendering="crispEdges"/>
<rect x="976" y="41" width="1.1" height="1.1" fill="#111" shape-rendering="crispEdges"/>
<rect x="976" y="43" width="1.1" height="1.1" fill="#111" shape-rendering="crispEdges"/>
<rect x="976" y="45" width="1.1" height="1.1" fill="#111" shape-rendering="crispEdges"/>
<rect x="981" y="34" width="1.1" height="1.1" fill="#111" shape-rendering="crispEdges"/>
<rect x="981" y="36" width="1.1" height="1.1" fill="#111" shape-rendering="crispEdges"/>
<rect x="981" y="39" width="1.1" height="1.1" fill="#111" shape-rendering="crispEdges"/>
<rect x="981" y="41" width="1.1" height="1.1" fill="#111" shape-rendering="crispEdges"/>
<rect x="981" y="43" width="1.1" height="1.1" fill="#111" shape-rendering="crispEdges"/>
<rect x="981" y="45" width="1.1" height="1.1" fill="#111" shape-rendering="crispEdges"/>
<rect x="992" y="30" width="1" height="18" fill="#aca899"/>
<rect x="993" y="30" width="1" height="18" fill="#fff"/>
<rect x="998.7" y="33.2" width="14.6" height="13.2" fill="#f4f3ec" stroke="#000" stroke-width="1.4" />
<path d="M999,41.9 L1013,41.9" fill="none" stroke="#000" stroke-width="1.2" />
<path d="M1025.4,31.8 L1025.4,46 M1021.4,40 L1036.4,40" fill="none" stroke="#000" stroke-width="1" stroke-dasharray="2 1.4"/>
<path d="M1021.4,42.6 L1037,34.6" fill="none" stroke="#18189c" stroke-width="1.05" />
<rect x="1043" y="30" width="1" height="18" fill="#aca899"/>
<rect x="1044" y="30" width="1" height="18" fill="#fff"/>
<path d="M474.3,64.6 L480,64.6" fill="none" stroke="#000" stroke-width="1.2" />
<path d="M478.4,62 L481.6,64.6 L478.4,67.2Z" fill="#000" stroke="none" stroke-width="0" />
<path d="M482,58 L482,72" fill="none" stroke="#000" stroke-width="1" stroke-dasharray="1.6 1.2"/>
<path d="M474.4,72.6 C480,70.6 481.6,62 487,58.2" fill="none" stroke="#18189c" stroke-width="1.1" />
<path d="M503.6,58 L503.6,72.4" fill="none" stroke="#000" stroke-width="1" stroke-dasharray="1.6 1.2"/>
<path d="M503.6,60 L503.6,66" fill="none" stroke="#000" stroke-width="1.3" />
<path d="M501,65 L506.2,65 L503.6,68.2Z" fill="#000" stroke="none" stroke-width="0" />
<path d="M495,70.6 L500,70.6 C504,70 507,66 510.8,64.2" fill="none" stroke="#18189c" stroke-width="1.1" />
<path d="M526.4,58 L526.4,72.4 M530.8,58 L530.8,72.4" fill="none" stroke="#000" stroke-width="1" stroke-dasharray="1.6 1.2"/>
<path d="M523.8,64.6 L529,64.6 L526.4,67.8Z M528.4,61.6 L533.2,61.6 L530.8,64.8Z" fill="#000" stroke="none" stroke-width="0" />
<path d="M518,70.6 L523,70.6 C527,70 530,66 533.8,64" fill="none" stroke="#18189c" stroke-width="1.1" />
<path d="M542.3000000000001,61.300000000000004 L546.7,61.300000000000004 C549.7,61.300000000000004 550.1,66.7 553.3000000000001,66.7 L558.1,66.7" fill="none" stroke="#fff" stroke-width="1" />
<path d="M542.3000000000001,63.7 L546.7,63.7 C549.7,63.7 550.1,69.10000000000001 553.3000000000001,69.10000000000001 L558.1,69.10000000000001" fill="none" stroke="#fff" stroke-width="1" />
<path d="M542.3000000000001,66.10000000000001 L546.7,66.10000000000001 C549.7,66.10000000000001 550.1,71.5 553.3000000000001,71.5 L558.1,71.5" fill="none" stroke="#fff" stroke-width="1" />
<path d="M541.6,60.6 L546,60.6 C549,60.6 549.4,66.0 552.6,66.0 L557.4,66.0" fill="none" stroke="#b8b5a4" stroke-width="1" />
<path d="M541.6,63.0 L546,63.0 C549,63.0 549.4,68.4 552.6,68.4 L557.4,68.4" fill="none" stroke="#b8b5a4" stroke-width="1" />
<path d="M541.6,65.4 L546,65.4 C549,65.4 549.4,70.8 552.6,70.8 L557.4,70.8" fill="none" stroke="#b8b5a4" stroke-width="1" />
<rect x="563" y="57" width="1" height="17" fill="#aca899"/>
<rect x="564" y="57" width="1" height="17" fill="#fff"/>
<rect x="569.7" y="59.7" width="14.6" height="11.2" fill="#fff" stroke="#101080" stroke-width="1.5" />
<path d="M571,64.4 L572.6,62.4 L574.4,64.4 L576.2,62.4 L578,64.4 L580,62.4 L582,64 L583.4,62.6" fill="none" stroke="#2038d8" stroke-width="1" />
<path d="M571,69.6 L573,68.2 L575,69.6 L577,68.2 L579,69.6 L581,68.2 L583.4,69.6" fill="none" stroke="#d02020" stroke-width="1" />
<path d="M573.2,68.4 L580.2,61.8 L583,62.6 L576.4,69 Z" fill="#fff" stroke="#000" stroke-width="1" />
<path d="M572.2,69.6 L573.4,66.6 L575.6,68.8Z" fill="#000" stroke="none" stroke-width="0" />
<path d="M580,61.4 L583.6,61 L583.2,64.2" fill="none" stroke="#000" stroke-width="1.6" />
<rect x="591" y="57" width="1" height="17" fill="#aca899"/>
<rect x="592" y="57" width="1" height="17" fill="#fff"/>
<rect x="594" y="55" width="22" height="20" fill="url(#dith)" shape-rendering="crispEdges"/>
<path d="M594.5,74.5 L594.5,55.5 L615.5,55.5" fill="none" stroke="#aca899" stroke-width="1"/>
<path d="M594.5,74.5 L615.5,74.5 L615.5,55.5" fill="none" stroke="#fff" stroke-width="1"/>
<path d="M605.6,59 L605.6,74" fill="none" stroke="#000" stroke-width="1.1" stroke-dasharray="1.3 1.3"/>
<path d="M598.4,66.5 L613.6,66.5" fill="none" stroke="#1414d8" stroke-width="1.3" />
<circle cx="600.6" cy="66.5" r="1.7" fill="#1414d8"/>
<circle cx="605.6" cy="66.5" r="1.7" fill="#1414d8"/>
<circle cx="611" cy="66.5" r="1.7" fill="#1414d8"/>
<path d="M627.6,59 L627.6,72.6" fill="none" stroke="#000" stroke-width="1.1" stroke-dasharray="1.3 1.3"/>
<path d="M620.4,65.4 L635.8,65.4" fill="none" stroke="#1414d8" stroke-width="1.3" />
<circle cx="622.8" cy="65.4" r="1.7" fill="#1414d8"/>
<circle cx="632.8" cy="65.4" r="1.7" fill="#1414d8"/>
<path d="M643,72.4 C648,66 648.6,58.2 651.7,58.2 C654.8,58.2 655.4,66 659.4,72" fill="none" stroke="#18189c" stroke-width="1.1" />
<path d="M651.7,60.6 L651.7,72.6" fill="none" stroke="#000" stroke-width="1" stroke-dasharray="1.2 1.2"/>
<path d="M666.2,58.2 C669.6,64 670.6,72.2 674.2,72.2 C677.8,72.2 679,64 681.8,58.2" fill="none" stroke="#18189c" stroke-width="1.1" />
<path d="M674.2,58.6 L674.2,70.6" fill="none" stroke="#000" stroke-width="1" stroke-dasharray="1.2 1.2"/>
<path d="M689,69 C690.2,66.4 692.4,66.6 693,69 C693.8,72.2 695.8,72 697,68.4 C698.4,63.6 699.2,59.8 700.6,59.8 C702,59.8 703.2,64.6 705,70" fill="none" stroke="#18189c" stroke-width="1.1" />
<path d="M700.6,61.6 L700.6,72.6" fill="none" stroke="#000" stroke-width="1" stroke-dasharray="1.2 1.2"/>
<path d="M712.4,62.4 C713.6,59.2 716,59.2 717,62 C718.6,66.6 720.6,71.2 723,71.2 C725,71.2 726.4,66 727.8,61" fill="none" stroke="#18189c" stroke-width="1.1" />
<path d="M723.2,58.6 L723.2,69.4" fill="none" stroke="#000" stroke-width="1" stroke-dasharray="1.2 1.2"/>
<path d="M735.2,72.8 L751,58" fill="none" stroke="#18189c" stroke-width="1.1" />
<path d="M742.4,58.4 L742.4,72.6" fill="none" stroke="#000" stroke-width="1.1" stroke-dasharray="1.2 1.2"/>
<path d="M758.4,69.6 C761.4,63.6 763.4,59.8 765.6,59.8 C768.4,59.8 770.6,65.6 773,71.4" fill="none" stroke="#18189c" stroke-width="1.05" />
<path d="M762.6,71.4 C764.6,66 767.2,61.6 769.4,61.6 C771,61.6 772.6,63.2 773.6,64.8" fill="none" stroke="#18189c" stroke-width="1.05" />
<path d="M766.2,60 L766.2,72.4" fill="none" stroke="#000" stroke-width="1" stroke-dasharray="1.2 1.2"/>
<path d="M781.4,60.4 C784,66 786,71.6 788.4,71.6 C790.6,71.6 793,66 795.6,60" fill="none" stroke="#18189c" stroke-width="1.05" />
<path d="M785.6,60 C787.6,65 790.4,69.6 792.4,69.6 C794,69.6 795.8,68.2 797,66.6" fill="none" stroke="#18189c" stroke-width="1.05" />
<path d="M788.8,58.4 L788.8,70" fill="none" stroke="#000" stroke-width="1" stroke-dasharray="1.2 1.2"/>
<path d="M804.2,59.6 C808.2,59.6 808.4,65.2 812.4,65.2 C816.4,65.2 816.4,59.6 820.4,59.6" fill="none" stroke="#1414d8" stroke-width="1.0" />
<path d="M804.2,62.1 C808.2,62.1 808.4,67.7 812.4,67.7 C816.4,67.7 816.4,62.1 820.4,62.1" fill="none" stroke="#1414d8" stroke-width="1.0" />
<path d="M804.2,64.6 C808.2,64.6 808.4,70.19999999999999 812.4,70.19999999999999 C816.4,70.19999999999999 816.4,64.6 820.4,64.6" fill="none" stroke="#1414d8" stroke-width="1.0" />
<path d="M812.4,58 L812.4,73.4" fill="none" stroke="#000" stroke-width="1" stroke-dasharray="1.2 1.2"/>
<circle cx="812.4" cy="70.6" r="1.9" fill="#1414d8"/>
<path d="M827.2,67.0 C831.2,67.0 831.4,61.4 835.4,61.4 C839.4,61.4 839.4,67.0 843.4,67.0" fill="none" stroke="#1414d8" stroke-width="1.0" />
<path d="M827.2,69.5 C831.2,69.5 831.4,63.9 835.4,63.9 C839.4,63.9 839.4,69.5 843.4,69.5" fill="none" stroke="#1414d8" stroke-width="1.0" />
<path d="M827.2,72.0 C831.2,72.0 831.4,66.4 835.4,66.4 C839.4,66.4 839.4,72.0 843.4,72.0" fill="none" stroke="#1414d8" stroke-width="1.0" />
<path d="M835.4,58 L835.4,73.4" fill="none" stroke="#000" stroke-width="1" stroke-dasharray="1.2 1.2"/>
<circle cx="835.4" cy="61.2" r="1.9" fill="#1414d8"/>
<rect x="849" y="57" width="1" height="17" fill="#aca899"/>
<rect x="850" y="57" width="1" height="17" fill="#fff"/>
<path d="M855.4,64.8 L858.6,59.8 L861.6,62.6 L861.6,65Z" fill="#4a58d0" stroke="#18188c" stroke-width="0.6" />
<path d="M856.8,63.6 L858.6,61.2 M858.8,63.8 L860.4,62.2" fill="none" stroke="#fff" stroke-width="0.7" />
<rect x="861.4" y="58.4" width="5.4" height="6.4" fill="#fff" stroke="#18188c" stroke-width="0.8" />
<path d="M862.2,59.2 L866.2,61.4 L862.2,63.6Z" fill="#d81818" stroke="none" stroke-width="0" />
<path d="M863.6,60.2 L865.4,62.6" fill="none" stroke="#fff" stroke-width="0.7" />
<path d="M866.6,65.2 L870.9,61.2 L870.9,68.6 L866.6,72.7Z" fill="#d2d22c" stroke="#000" stroke-width="1.1" />
<rect x="856.5" y="65.8" width="10.1" height="6.7" fill="#e2e232" stroke="#000" stroke-width="1.3" />
<path d="M857.6,67.4 L858.6,67.4 M859.8,69 L858.8,69 M857.6,70.8 L858.6,70.8 M864,67.4 L865,67.4 M865,69 L864,69 M864,70.8 L865,70.8" fill="none" stroke="#a8a818" stroke-width="0.9" />
<rect x="859.9" y="66.8" width="2.8" height="1.4" fill="#000" />
<rect x="860.8" y="68" width="1.1" height="2.2" fill="#000" />
<path d="M878.5,64.8 L884.0999999999999,64.8 L881.3,67.8 Z" fill="#000"/>
<rect x="890" y="57" width="1" height="17" fill="#aca899"/>
<rect x="891" y="57" width="1" height="17" fill="#fff"/>
<rect x="896.9" y="59.8" width="14.4" height="12.8" fill="#fff" stroke="#000" stroke-width="1.1" />
<path d="M897,62 L911,62 M897,64 L911,64 M897,66 L911,66 M897,68 L911,68 M897,70 L911,70 M901.5,60 L901.5,72 M906.5,60 L906.5,72" fill="none" stroke="#000" stroke-width="0.75" shape-rendering="crispEdges"/>
<rect x="918" y="57" width="1" height="17" fill="#aca899"/>
<rect x="919" y="57" width="1" height="17" fill="#fff"/>
<text x="932.4" y="72.4" font-size="19.4" fill="#000" font-family="Liberation Sans" font-weight="normal" text-anchor="middle" textLength="17.6" lengthAdjust="spacingAndGlyphs" stroke="#000" stroke-width="0.5">'P'</text>
<rect x="946" y="57" width="1" height="17" fill="#aca899"/>
<rect x="947" y="57" width="1" height="17" fill="#fff"/>
<rect x="949" y="55" width="22" height="20" fill="url(#dith)" shape-rendering="crispEdges"/>
<path d="M949.5,74.5 L949.5,55.5 L970.5,55.5" fill="none" stroke="#aca899" stroke-width="1"/>
<path d="M949.5,74.5 L970.5,74.5 L970.5,55.5" fill="none" stroke="#fff" stroke-width="1"/>
<rect x="972" y="55" width="22" height="20" fill="url(#dith)" shape-rendering="crispEdges"/>
<path d="M972.5,74.5 L972.5,55.5 L993.5,55.5" fill="none" stroke="#aca899" stroke-width="1"/>
<path d="M972.5,74.5 L993.5,74.5 L993.5,55.5" fill="none" stroke="#fff" stroke-width="1"/>
<text x="956" y="64.7" font-size="8.4" fill="#8a0c14" font-family="Liberation Sans" font-weight="bold" text-anchor="middle" textLength="6.6" lengthAdjust="spacingAndGlyphs" stroke="#8a0c14" stroke-width="0.7">X</text>
<path d="M961.0,64.2 L962.2,64.2 L962.5,70.4 L964.5,73.5 L958.7,73.5 L960.7,70.4Z" fill="#000" stroke="none" stroke-width="0" />
<path d="M956.0,67.8 C958.0,65.2 965.2,65.2 967.2,67.8" fill="none" stroke="#000" stroke-width="1.1" />
<path d="M954.0,68.6 C954.4,70.6 957.0,70.6 957.4,68.6 M965.8000000000001,68.6 C966.2,70.6 968.8000000000001,70.6 969.2,68.6" fill="none" stroke="#3a3a10" stroke-width="1" />
<text x="979" y="64.7" font-size="8.4" fill="#8a0c14" font-family="Liberation Sans" font-weight="bold" text-anchor="middle" textLength="6.6" lengthAdjust="spacingAndGlyphs" stroke="#8a0c14" stroke-width="0.7">Y</text>
<path d="M984.0,64.2 L985.2,64.2 L985.5,70.4 L987.5,73.5 L981.7,73.5 L983.7,70.4Z" fill="#000" stroke="none" stroke-width="0" />
<path d="M979.0,67.8 C981.0,65.2 988.2,65.2 990.2,67.8" fill="none" stroke="#000" stroke-width="1.1" />
<path d="M977.0,68.6 C977.4,70.6 980.0,70.6 980.4,68.6 M988.8000000000001,68.6 C989.2,70.6 991.8000000000001,70.6 992.2,68.6" fill="none" stroke="#3a3a10" stroke-width="1" />
<rect x="997" y="57" width="1" height="17" fill="#aca899"/>
<rect x="998" y="57" width="1" height="17" fill="#fff"/>
<circle cx="1010.3" cy="64.1" r="5.3" fill="#d0f2f2" stroke="#000" stroke-width="1.5"/>
<path d="M1014.3,68.5 L1018.4,72.8" fill="none" stroke="#000" stroke-width="2.0" stroke-linecap="round"/>
<path d="M1007.0999999999999,64.1 L1013.5,64.1" fill="none" stroke="#000" stroke-width="2" />
<path d="M1010.3,60.89999999999999 L1010.3,67.3" fill="none" stroke="#000" stroke-width="2" />
<circle cx="1033.2" cy="64.1" r="5.3" fill="#d0f2f2" stroke="#000" stroke-width="1.5"/>
<path d="M1037.2,68.5 L1041.3,72.8" fill="none" stroke="#000" stroke-width="2.0" stroke-linecap="round"/>
<path d="M1030.0,64.1 L1036.4,64.1" fill="none" stroke="#000" stroke-width="2" />
<rect x="1048" y="57" width="1" height="17" fill="#aca899"/>
<rect x="1049" y="57" width="1" height="17" fill="#fff"/>
<path d="M474,92 C474,86 486,84.6 487,92 C487.6,98.6 482,100.4 478.4,99 C476.6,98 479,95.6 476.4,95 C474.6,94.6 474,93.6 474,92Z" fill="#d2cfbf" stroke="#aeab9a" stroke-width="1.3" />
<path d="M477,90 L484,90 M477,93 L484.6,93 M479,87.6 L479,96.6 M482.2,87.6 L482.2,97.6" fill="none" stroke="#bcb9aa" stroke-width="0.8" />
<path d="M495.9,84.0 L509.1,84.0 L509.1,87.0 L508.2,87.0 L507.5,85.2 L500.2,85.2 L500.2,90.2 L504.5,90.2 L505.1,89.0 L505.9,89.0 L505.9,93.0 L505.1,93.0 L504.5,91.4 L500.2,91.4 L500.2,96.4 L502.9,96.9 L502.9,98.0 L495.9,98.0 L495.9,96.9 L497.8,96.4 L497.8,85.6 L495.9,85.1Z" fill="#000"/>
<rect x="2.6" y="3.6" width="15" height="15" fill="#b6c3de" stroke="#000" stroke-width="1.2" />
<rect x="3.6" y="4.6" width="3.6" height="3.4" fill="#e8ecf4" />
<rect x="8.4" y="4.8" width="4.4" height="2.2" fill="#dde3f0" />
<rect x="7.6" y="11.6" width="4" height="3.2" fill="#d4dcec" />
<rect x="3.4" y="15.2" width="9.2" height="2.4" fill="#f6f6fa" />
<rect x="13" y="16.2" width="3.8" height="1.1" fill="#101010" />
<path d="M5.2,15 L5.2,8.4 L6.4,6.4" fill="none" stroke="#1420c0" stroke-width="1.3" />
<path d="M7.4,10.6 L9.6,7.6 L12,10.4 L9.8,13 L11.6,14.6 M12.4,6.6 L11,8.6" fill="none" stroke="#1420c0" stroke-width="1.2" />
<path d="M8,9.2 L10,9.2 M13.6,7.6 L16,7.6 M13.6,10.2 L16,10.2 M13.6,12.8 L16,12.8" fill="none" stroke="#d83030" stroke-width="1.3" />
<defs><linearGradient id="gL" x1="0" y1="0" x2="1" y2="1"><stop offset="0" stop-color="#7b98e4"/><stop offset="0.5" stop-color="#5d80dc"/><stop offset="1" stop-color="#6888e0"/></linearGradient><linearGradient id="gB" x1="0" y1="0" x2="1" y2="1"><stop offset="0" stop-color="#4b82f0"/><stop offset="0.45" stop-color="#2558dc"/><stop offset="1" stop-color="#1a46c4"/></linearGradient><linearGradient id="gX" x1="0" y1="0" x2="1" y2="1"><stop offset="0" stop-color="#e8805c"/><stop offset="0.45" stop-color="#d4502c"/><stop offset="1" stop-color="#bc3414"/></linearGradient></defs>
<rect x="428" y="2" width="19" height="19" fill="url(#gL)" stroke="#b4c8f4" stroke-width="1.1" rx="3"/>
<rect x="432.2" y="14" width="6.8" height="3" fill="#fff" />
<clipPath id="cl"><rect x="0" y="0" width="462" height="30"/></clipPath><g clip-path="url(#cl)">
<rect x="451" y="2" width="19" height="19" fill="url(#gL)" stroke="#b4c8f4" stroke-width="1.1" rx="3"/>
<rect x="455.6" y="7.6" width="10" height="8.6" fill="none" stroke="#fff" stroke-width="1.2" />
<rect x="455" y="6.6" width="11" height="2.2" fill="#fff" />
</g>
<rect x="468.6" y="2.7" width="14.6" height="14.6" fill="#fff" stroke="#000" stroke-width="1.1" />
<rect x="469.2" y="3.2" width="13.4" height="2.6" fill="#141488" />
<rect x="472.6" y="9.2" width="9.2" height="6.4" fill="#30d8d8" stroke="#000" stroke-width="1" />
<path d="M473.4,14.8 C475,11.4 479,11.4 481,14.8" fill="none" stroke="#0a5a5a" stroke-width="1" />
<path d="M472.6,7.4 L481.6,7.4" fill="none" stroke="#888" stroke-width="0.8" />
<rect x="470.2" y="8.4" width="1" height="1" fill="#444" />
<rect x="470.2" y="11" width="1" height="1" fill="#444" />
<rect x="470.2" y="13.6" width="1" height="1" fill="#444" />
<text x="489.3" y="16.9" font-size="13" fill="#0a246a" font-family="Liberation Sans" font-weight="bold" text-anchor="start" textLength="111.7" lengthAdjust="spacingAndGlyphs" >Transient Analysis</text>
<text x="488.3" y="15.9" font-size="13" fill="#fff" font-family="Liberation Sans" font-weight="bold" text-anchor="start" textLength="111.7" lengthAdjust="spacingAndGlyphs" >Transient Analysis</text>
<rect x="986.5" y="0.9" width="20" height="20" fill="url(#gB)" stroke="#fff" stroke-width="1.1" rx="3.2"/>
<rect x="991" y="13" width="7.2" height="3" fill="#fff" />
<rect x="1009.5" y="0.9" width="20" height="20" fill="url(#gB)" stroke="#fff" stroke-width="1.1" rx="3.2"/>
<rect x="1014.6" y="6.2" width="9.6" height="9.2" fill="none" stroke="#fff" stroke-width="1.2" />
<rect x="1014" y="5.2" width="10.8" height="2.4" fill="#fff" />
<rect x="1032.7" y="0.9" width="20" height="20" fill="url(#gX)" stroke="#fff" stroke-width="1.1" rx="3.2"/>
<path d="M1037.8,5.8 L1047.6,15.6 M1047.6,5.8 L1037.8,15.6" fill="none" stroke="#fff" stroke-width="2.1" />
<rect x="1052.7" y="110" width="1.3" height="396" fill="#f6f5ee" />
</svg>
</body></html>
